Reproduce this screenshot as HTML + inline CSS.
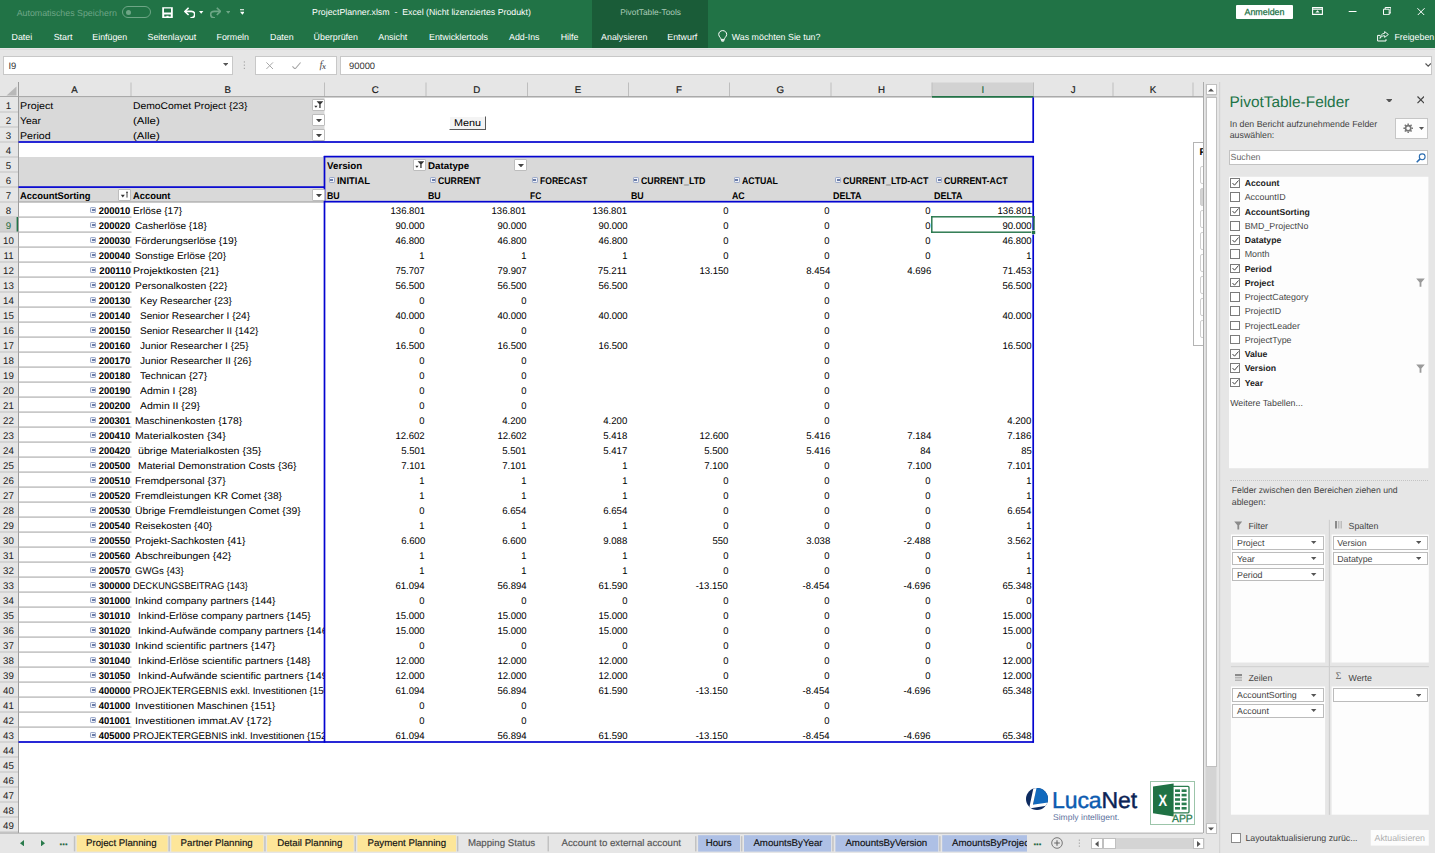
<!DOCTYPE html>
<html lang="de">
<head>
<meta charset="utf-8">
<title>ProjectPlanner.xlsm - Excel</title>
<style>
html,body{margin:0;padding:0}
body{width:1435px;height:853px;overflow:hidden;background:#e6e6e6;position:relative;font-family:"Liberation Sans",sans-serif;font-size:9px;text-rendering:geometricPrecision}
div,svg,i{position:absolute;display:block}
.t{white-space:pre}
.cb{width:6.4px;height:6.4px;box-sizing:border-box;border:1px solid #9aa8c9;background:#eef1f8;border-radius:1.2px}
.cb:after{content:"";position:absolute;left:0.5px;top:1.6px;width:3.4px;height:1.2px;background:#6a7ba6}
</style>
</head>
<body>
<svg style="left:0;top:0" width="1435" height="853" viewBox="0 0 1435 853"><rect x="0" y="0" width="1435" height="48" fill="#217346"/><rect x="592" y="0" width="116" height="48" fill="#1a5c38"/></svg>
<div class="t" style="top:5.7px;height:14px;line-height:14px;font-size:8.84px;color:#6ea686;left:16.7px;transform-origin:0 50%;">Automatisches Speichern</div>
<div style="left:122.4px;top:6.2px;width:28.4px;height:12px;border:1px solid #6ea686;border-radius:6px;box-sizing:border-box"></div>
<div style="left:125.6px;top:9.6px;width:5.4px;height:5.4px;background:#6ea686;border-radius:50%"></div>
<svg style="left:162.4px;top:6.9px" width="11" height="11.2" viewBox="0 0 11 11.2"><path d="M0.2 0.2H10.8V11H0.2Z" fill="#fff"/><path d="M2 1.6H9V5.4H2Z M2.2 7.4H8.8V9.6H6.6V8.8H4.4V9.6H2.2Z" fill="#217346"/></svg>
<svg style="left:184px;top:6.6px" width="11.4" height="11.4" viewBox="0 0 11.4 11.4"><g fill="none" stroke="#fff" stroke-width="1.6"><path d="M4.6 0.8L0.9 4.4L4.6 8"/><path d="M1.2 4.4H7.2C9.4 4.4 10.7 5.9 10.7 7.6C10.7 9.3 9.4 10.7 7.4 10.7H6.4"/></g></svg>
<svg style="left:199.2px;top:10.8px" width="4.4" height="2.8" viewBox="0 0 4.4 2.8"><path d="M0 0H4.4L2.2 2.8Z" fill="#fff"/></svg>
<svg style="left:209.8px;top:6.6px" width="11.4" height="11.4" viewBox="0 0 11.4 11.4"><g transform="translate(11.4 0) scale(-1 1)" fill="none" stroke="#6ea686" stroke-width="1.6"><path d="M4.6 0.8L0.9 4.4L4.6 8"/><path d="M1.2 4.4H7.2C9.4 4.4 10.7 5.9 10.7 7.6C10.7 9.3 9.4 10.7 7.4 10.7H6.4"/></g></svg>
<svg style="left:225.6px;top:10.8px" width="4.4" height="2.8" viewBox="0 0 4.4 2.8"><path d="M0 0H4.4L2.2 2.8Z" fill="#6ea686"/></svg>
<svg style="left:239.6px;top:9.2px" width="4.8" height="6" viewBox="0 0 4.8 6"><path d="M0 0.2H4.8V1.3H0Z M0 2.8H4.8L2.4 5.8Z" fill="#fff"/></svg>
<div class="t" style="top:5.2px;height:14px;line-height:14px;font-size:8.77px;color:#fff;left:312.1px;transform-origin:0 50%;">ProjectPlanner.xlsm  -  Excel (Nicht lizenziertes Produkt)</div>
<div class="t" style="top:5.4px;height:14px;line-height:14px;font-size:8.35px;color:#a9cbb7;left:620.2px;transform-origin:0 50%;">PivotTable-Tools</div>
<div style="left:1235.6px;top:4.5px;width:57.7px;height:14.3px;background:#fff;border-radius:1px"></div>
<div class="t" style="top:5px;height:14px;line-height:14px;font-size:8.9px;color:#217346;left:1235.5px;width:58px;text-align:center;transform-origin:50% 50%;-webkit-text-stroke:0.25px #217346;">Anmelden</div>
<svg style="left:1312.3px;top:7.4px" width="11" height="8" viewBox="0 0 11 8"><path d="M0.6 0.6H10.4V7.4H0.6Z M0.6 2.2H10.4" fill="none" stroke="#fff" stroke-width="1.1"/><path d="M5.5 3.2L7.6 5.6H3.4Z" fill="#fff"/></svg>
<svg style="left:0;top:0" width="1435" height="853" viewBox="0 0 1435 853"><rect x="1348.7" y="11" width="7.8" height="1" fill="#fff"/></svg>
<svg style="left:1382.8px;top:7.2px" width="8.4" height="8.2" viewBox="0 0 8.4 8.2"><path d="M0.5 2.2H6.2V7.7H0.5Z" fill="none" stroke="#fff" stroke-width="1"/><path d="M2.2 2.2V0.5H7.9V6H6.2" fill="none" stroke="#fff" stroke-width="1"/></svg>
<svg style="left:1417.4px;top:7.8px" width="8" height="7.6" viewBox="0 0 8 7.6"><path d="M0.4 0.2L7.6 7.4M7.6 0.2L0.4 7.4" fill="none" stroke="#fff" stroke-width="1"/></svg>
<div class="t" style="top:29.5px;height:14px;line-height:14px;font-size:8.86px;color:#fff;left:11.5px;transform-origin:0 50%;">Datei</div>
<div class="t" style="top:29.5px;height:14px;line-height:14px;font-size:8.86px;color:#fff;left:53.7px;transform-origin:0 50%;">Start</div>
<div class="t" style="top:29.5px;height:14px;line-height:14px;font-size:8.86px;color:#fff;left:92.3px;transform-origin:0 50%;">Einfügen</div>
<div class="t" style="top:29.5px;height:14px;line-height:14px;font-size:8.86px;color:#fff;left:147.5px;transform-origin:0 50%;">Seitenlayout</div>
<div class="t" style="top:29.5px;height:14px;line-height:14px;font-size:8.86px;color:#fff;left:216.5px;transform-origin:0 50%;">Formeln</div>
<div class="t" style="top:29.5px;height:14px;line-height:14px;font-size:8.86px;color:#fff;left:270px;transform-origin:0 50%;">Daten</div>
<div class="t" style="top:29.5px;height:14px;line-height:14px;font-size:8.86px;color:#fff;left:313.6px;transform-origin:0 50%;">Überprüfen</div>
<div class="t" style="top:29.5px;height:14px;line-height:14px;font-size:8.86px;color:#fff;left:378.3px;transform-origin:0 50%;">Ansicht</div>
<div class="t" style="top:29.5px;height:14px;line-height:14px;font-size:8.86px;color:#fff;left:429px;transform-origin:0 50%;">Entwicklertools</div>
<div class="t" style="top:29.5px;height:14px;line-height:14px;font-size:8.86px;color:#fff;left:509px;transform-origin:0 50%;">Add-Ins</div>
<div class="t" style="top:29.5px;height:14px;line-height:14px;font-size:8.86px;color:#fff;left:560.7px;transform-origin:0 50%;">Hilfe</div>
<div class="t" style="top:29.5px;height:14px;line-height:14px;font-size:8.86px;color:#fff;left:601.1px;transform-origin:0 50%;">Analysieren</div>
<div class="t" style="top:29.5px;height:14px;line-height:14px;font-size:8.86px;color:#fff;left:667.3px;transform-origin:0 50%;">Entwurf</div>
<div class="t" style="top:29.5px;height:14px;line-height:14px;font-size:8.86px;color:#fff;left:731.8px;transform-origin:0 50%;">Was möchten Sie tun?</div>
<div class="t" style="top:29.5px;height:14px;line-height:14px;font-size:8.86px;color:#fff;left:1394.4px;transform-origin:0 50%;">Freigeben</div>
<svg style="left:718.2px;top:29.8px" width="9.4" height="12.4" viewBox="0 0 9.4 12.4"><path d="M4.7 0.6C2.4 0.6 0.7 2.3 0.7 4.4C0.7 5.8 1.5 6.6 2.2 7.5C2.7 8.1 2.9 8.7 2.9 9.4H6.5C6.5 8.7 6.7 8.1 7.2 7.5C7.9 6.6 8.7 5.8 8.7 4.4C8.7 2.3 7 0.6 4.7 0.6Z" fill="none" stroke="#fff" stroke-width="1"/><path d="M3 10.6H6.4M3.6 11.8H5.8" stroke="#fff" stroke-width="0.9" fill="none"/></svg>
<svg style="left:1377px;top:31.2px" width="12" height="10.6" viewBox="0 0 12 10.6"><path d="M3 4.4H0.6V10H9V8.2" fill="none" stroke="#fff" stroke-width="1"/><path d="M7.6 0.6L11.4 3.5L7.6 6.4V4.7C5.4 4.7 4 5.6 3 7.4C3.2 4.6 4.8 2.6 7.6 2.3Z" fill="none" stroke="#fff" stroke-width="0.9" stroke-linejoin="round"/></svg>
<svg style="left:0;top:0" width="1435" height="853" viewBox="0 0 1435 853"><rect x="0" y="49" width="1435" height="1" fill="#dcdcdc"/></svg>
<div style="left:3px;top:55.7px;width:230px;height:19px;background:#fff;border:1px solid #c8c8c8;box-sizing:border-box"></div>
<div class="t" style="top:58.7px;height:14px;line-height:14px;font-size:9.4px;color:#333;left:8.5px;transform-origin:0 50%;">I9</div>
<div style="left:255.4px;top:55.7px;width:82px;height:19px;background:#fff;border:1px solid #c8c8c8;box-sizing:border-box"></div>
<div style="left:340.4px;top:55.7px;width:1092px;height:19px;background:#fff;border:1px solid #c8c8c8;box-sizing:border-box"></div>
<div class="t" style="top:58.7px;height:14px;line-height:14px;font-size:9.4px;color:#333;left:349px;transform-origin:0 50%;">90000</div>
<svg style="left:222.6px;top:63px" width="5.4" height="3" viewBox="0 0 5.4 3"><path d="M0 0H5.4L2.7 3Z" fill="#555"/></svg>
<svg style="left:0;top:0" width="1435" height="853" viewBox="0 0 1435 853"><rect x="243.8" y="61.4" width="1.1" height="1.1" fill="#9a9a9a"/><rect x="243.8" y="64.6" width="1.1" height="1.1" fill="#9a9a9a"/><rect x="243.8" y="67.8" width="1.1" height="1.1" fill="#9a9a9a"/></svg>
<svg style="left:266.2px;top:61.8px" width="7.4" height="7.4" viewBox="0 0 7.4 7.4"><path d="M0.4 0.4L7 7M7 0.4L0.4 7" stroke="#a6a6a6" stroke-width="1" fill="none"/></svg>
<svg style="left:292.4px;top:61.6px" width="9" height="7.6" viewBox="0 0 9 7.6"><path d="M0.4 4.4L3 7L8.6 0.5" stroke="#a6a6a6" stroke-width="1.1" fill="none"/></svg>
<div class="t" style="left:319.6px;top:58px;height:14px;line-height:14px;font-family:'Liberation Serif',serif;font-style:italic;font-size:11px;color:#555;letter-spacing:-0.6px">f<span style="font-size:8px;position:relative;top:1.2px;font-weight:bold">x</span></div>
<svg style="left:1424.6px;top:63.4px" width="6.4" height="4" viewBox="0 0 6.4 4"><path d="M0.5 0.5L3.2 3.2L5.9 0.5" stroke="#555" stroke-width="1.1" fill="none"/></svg>
<svg style="left:0;top:0" width="1435" height="853" viewBox="0 0 1435 853"><rect x="18" y="97" width="1185" height="736" fill="#fff"/></svg>
<div class="t" style="top:84.2px;height:14px;line-height:14px;font-size:9.7px;color:#1c1c1c;left:54.5px;width:40px;text-align:center;transform-origin:50% 50%;-webkit-text-stroke:0.2px;">A</div>
<div class="t" style="top:84.2px;height:14px;line-height:14px;font-size:9.7px;color:#1c1c1c;left:207.75px;width:40px;text-align:center;transform-origin:50% 50%;-webkit-text-stroke:0.2px;">B</div>
<div class="t" style="top:84.2px;height:14px;line-height:14px;font-size:9.7px;color:#1c1c1c;left:355.25px;width:40px;text-align:center;transform-origin:50% 50%;-webkit-text-stroke:0.2px;">C</div>
<div class="t" style="top:84.2px;height:14px;line-height:14px;font-size:9.7px;color:#1c1c1c;left:456.75px;width:40px;text-align:center;transform-origin:50% 50%;-webkit-text-stroke:0.2px;">D</div>
<div class="t" style="top:84.2px;height:14px;line-height:14px;font-size:9.7px;color:#1c1c1c;left:558px;width:40px;text-align:center;transform-origin:50% 50%;-webkit-text-stroke:0.2px;">E</div>
<div class="t" style="top:84.2px;height:14px;line-height:14px;font-size:9.7px;color:#1c1c1c;left:659px;width:40px;text-align:center;transform-origin:50% 50%;-webkit-text-stroke:0.2px;">F</div>
<div class="t" style="top:84.2px;height:14px;line-height:14px;font-size:9.7px;color:#1c1c1c;left:760.25px;width:40px;text-align:center;transform-origin:50% 50%;-webkit-text-stroke:0.2px;">G</div>
<div class="t" style="top:84.2px;height:14px;line-height:14px;font-size:9.7px;color:#1c1c1c;left:861.5px;width:40px;text-align:center;transform-origin:50% 50%;-webkit-text-stroke:0.2px;">H</div>
<svg style="left:0;top:0" width="1435" height="853" viewBox="0 0 1435 853"><rect x="932" y="82.5" width="101.5" height="14.5" fill="#d2d2d2"/></svg>
<div class="t" style="top:84.2px;height:14px;line-height:14px;font-size:9.7px;color:#1e6b41;left:962.75px;width:40px;text-align:center;transform-origin:50% 50%;-webkit-text-stroke:0.2px;">I</div>
<div class="t" style="top:84.2px;height:14px;line-height:14px;font-size:9.7px;color:#1c1c1c;left:1053.25px;width:40px;text-align:center;transform-origin:50% 50%;-webkit-text-stroke:0.2px;">J</div>
<div class="t" style="top:84.2px;height:14px;line-height:14px;font-size:9.7px;color:#1c1c1c;left:1133px;width:40px;text-align:center;transform-origin:50% 50%;-webkit-text-stroke:0.2px;">K</div>
<svg style="left:0;top:0" width="1435" height="853" viewBox="0 0 1435 853"><rect x="130.5" y="82.5" width="1" height="14.5" fill="#bebebe"/><rect x="324" y="82.5" width="1" height="14.5" fill="#bebebe"/><rect x="425.5" y="82.5" width="1" height="14.5" fill="#bebebe"/><rect x="527" y="82.5" width="1" height="14.5" fill="#bebebe"/><rect x="628" y="82.5" width="1" height="14.5" fill="#bebebe"/><rect x="729" y="82.5" width="1" height="14.5" fill="#bebebe"/><rect x="830.5" y="82.5" width="1" height="14.5" fill="#bebebe"/><rect x="931.5" y="82.5" width="1" height="14.5" fill="#bebebe"/><rect x="1033" y="82.5" width="1" height="14.5" fill="#bebebe"/><rect x="1112.5" y="82.5" width="1" height="14.5" fill="#bebebe"/><rect x="1192.5" y="82.5" width="1" height="14.5" fill="#bebebe"/><rect x="18" y="82" width="1" height="15" fill="#9c9c9c"/><rect x="0" y="96.1" width="1203" height="1.4" fill="#a4a4a4"/><rect x="932" y="96" width="101.5" height="1.7" fill="#217346"/></svg>
<svg style="left:6px;top:85.5px" width="11" height="10" viewBox="0 0 11 10"><path d="M10.5 0.5V9.5H0.5Z" fill="#b8b8b8"/></svg>
<svg style="left:0;top:0" width="1435" height="853" viewBox="0 0 1435 853"><rect x="0" y="97" width="18" height="736" fill="#e6e6e6"/><rect x="0" y="111.5" width="18" height="1" fill="#c2c2c2"/><rect x="0" y="126.5" width="18" height="1" fill="#c2c2c2"/><rect x="0" y="141.5" width="18" height="1" fill="#c2c2c2"/><rect x="0" y="156.5" width="18" height="1" fill="#c2c2c2"/><rect x="0" y="171.5" width="18" height="1" fill="#c2c2c2"/><rect x="0" y="186.5" width="18" height="1" fill="#c2c2c2"/><rect x="0" y="201.5" width="18" height="1" fill="#c2c2c2"/><rect x="0" y="216.5" width="18" height="1" fill="#c2c2c2"/><rect x="0" y="217" width="18" height="15" fill="#d2d2d2"/><rect x="16.6" y="217" width="1.6" height="15" fill="#217346"/><rect x="0" y="231.5" width="18" height="1" fill="#c2c2c2"/><rect x="0" y="246.5" width="18" height="1" fill="#c2c2c2"/><rect x="0" y="261.5" width="18" height="1" fill="#c2c2c2"/><rect x="0" y="276.5" width="18" height="1" fill="#c2c2c2"/><rect x="0" y="291.5" width="18" height="1" fill="#c2c2c2"/><rect x="0" y="306.5" width="18" height="1" fill="#c2c2c2"/><rect x="0" y="321.5" width="18" height="1" fill="#c2c2c2"/><rect x="0" y="336.5" width="18" height="1" fill="#c2c2c2"/><rect x="0" y="351.5" width="18" height="1" fill="#c2c2c2"/><rect x="0" y="366.5" width="18" height="1" fill="#c2c2c2"/><rect x="0" y="381.5" width="18" height="1" fill="#c2c2c2"/><rect x="0" y="396.5" width="18" height="1" fill="#c2c2c2"/><rect x="0" y="411.5" width="18" height="1" fill="#c2c2c2"/><rect x="0" y="426.5" width="18" height="1" fill="#c2c2c2"/><rect x="0" y="441.5" width="18" height="1" fill="#c2c2c2"/><rect x="0" y="456.5" width="18" height="1" fill="#c2c2c2"/><rect x="0" y="471.5" width="18" height="1" fill="#c2c2c2"/><rect x="0" y="486.5" width="18" height="1" fill="#c2c2c2"/><rect x="0" y="501.5" width="18" height="1" fill="#c2c2c2"/><rect x="0" y="516.5" width="18" height="1" fill="#c2c2c2"/><rect x="0" y="531.5" width="18" height="1" fill="#c2c2c2"/><rect x="0" y="546.5" width="18" height="1" fill="#c2c2c2"/><rect x="0" y="561.5" width="18" height="1" fill="#c2c2c2"/><rect x="0" y="576.5" width="18" height="1" fill="#c2c2c2"/><rect x="0" y="591.5" width="18" height="1" fill="#c2c2c2"/><rect x="0" y="606.5" width="18" height="1" fill="#c2c2c2"/><rect x="0" y="621.5" width="18" height="1" fill="#c2c2c2"/><rect x="0" y="636.5" width="18" height="1" fill="#c2c2c2"/><rect x="0" y="651.5" width="18" height="1" fill="#c2c2c2"/><rect x="0" y="666.5" width="18" height="1" fill="#c2c2c2"/><rect x="0" y="681.5" width="18" height="1" fill="#c2c2c2"/><rect x="0" y="696.5" width="18" height="1" fill="#c2c2c2"/><rect x="0" y="711.5" width="18" height="1" fill="#c2c2c2"/><rect x="0" y="726.5" width="18" height="1" fill="#c2c2c2"/><rect x="0" y="741.5" width="18" height="1" fill="#c2c2c2"/><rect x="0" y="756.5" width="18" height="1" fill="#c2c2c2"/><rect x="0" y="771.5" width="18" height="1" fill="#c2c2c2"/><rect x="0" y="786.5" width="18" height="1" fill="#c2c2c2"/><rect x="0" y="801.5" width="18" height="1" fill="#c2c2c2"/><rect x="0" y="816.5" width="18" height="1" fill="#c2c2c2"/><rect x="0" y="831.5" width="18" height="1" fill="#c2c2c2"/></svg>
<div class="t" style="top:100.1px;height:14px;line-height:14px;font-size:9.7px;color:#1c1c1c;left:-0.5px;width:18px;text-align:center;transform-origin:50% 50%;">1</div>
<div class="t" style="top:115.1px;height:14px;line-height:14px;font-size:9.7px;color:#1c1c1c;left:-0.5px;width:18px;text-align:center;transform-origin:50% 50%;">2</div>
<div class="t" style="top:130.1px;height:14px;line-height:14px;font-size:9.7px;color:#1c1c1c;left:-0.5px;width:18px;text-align:center;transform-origin:50% 50%;">3</div>
<div class="t" style="top:145.1px;height:14px;line-height:14px;font-size:9.7px;color:#1c1c1c;left:-0.5px;width:18px;text-align:center;transform-origin:50% 50%;">4</div>
<div class="t" style="top:160.1px;height:14px;line-height:14px;font-size:9.7px;color:#1c1c1c;left:-0.5px;width:18px;text-align:center;transform-origin:50% 50%;">5</div>
<div class="t" style="top:175.1px;height:14px;line-height:14px;font-size:9.7px;color:#1c1c1c;left:-0.5px;width:18px;text-align:center;transform-origin:50% 50%;">6</div>
<div class="t" style="top:190.1px;height:14px;line-height:14px;font-size:9.7px;color:#1c1c1c;left:-0.5px;width:18px;text-align:center;transform-origin:50% 50%;">7</div>
<div class="t" style="top:205.1px;height:14px;line-height:14px;font-size:9.7px;color:#1c1c1c;left:-0.5px;width:18px;text-align:center;transform-origin:50% 50%;">8</div>
<div class="t" style="top:220.1px;height:14px;line-height:14px;font-size:9.7px;color:#1e6b41;left:-0.5px;width:18px;text-align:center;transform-origin:50% 50%;">9</div>
<div class="t" style="top:235.1px;height:14px;line-height:14px;font-size:9.7px;color:#1c1c1c;left:-0.5px;width:18px;text-align:center;transform-origin:50% 50%;">10</div>
<div class="t" style="top:250.1px;height:14px;line-height:14px;font-size:9.7px;color:#1c1c1c;left:-0.5px;width:18px;text-align:center;transform-origin:50% 50%;">11</div>
<div class="t" style="top:265.1px;height:14px;line-height:14px;font-size:9.7px;color:#1c1c1c;left:-0.5px;width:18px;text-align:center;transform-origin:50% 50%;">12</div>
<div class="t" style="top:280.1px;height:14px;line-height:14px;font-size:9.7px;color:#1c1c1c;left:-0.5px;width:18px;text-align:center;transform-origin:50% 50%;">13</div>
<div class="t" style="top:295.1px;height:14px;line-height:14px;font-size:9.7px;color:#1c1c1c;left:-0.5px;width:18px;text-align:center;transform-origin:50% 50%;">14</div>
<div class="t" style="top:310.1px;height:14px;line-height:14px;font-size:9.7px;color:#1c1c1c;left:-0.5px;width:18px;text-align:center;transform-origin:50% 50%;">15</div>
<div class="t" style="top:325.1px;height:14px;line-height:14px;font-size:9.7px;color:#1c1c1c;left:-0.5px;width:18px;text-align:center;transform-origin:50% 50%;">16</div>
<div class="t" style="top:340.1px;height:14px;line-height:14px;font-size:9.7px;color:#1c1c1c;left:-0.5px;width:18px;text-align:center;transform-origin:50% 50%;">17</div>
<div class="t" style="top:355.1px;height:14px;line-height:14px;font-size:9.7px;color:#1c1c1c;left:-0.5px;width:18px;text-align:center;transform-origin:50% 50%;">18</div>
<div class="t" style="top:370.1px;height:14px;line-height:14px;font-size:9.7px;color:#1c1c1c;left:-0.5px;width:18px;text-align:center;transform-origin:50% 50%;">19</div>
<div class="t" style="top:385.1px;height:14px;line-height:14px;font-size:9.7px;color:#1c1c1c;left:-0.5px;width:18px;text-align:center;transform-origin:50% 50%;">20</div>
<div class="t" style="top:400.1px;height:14px;line-height:14px;font-size:9.7px;color:#1c1c1c;left:-0.5px;width:18px;text-align:center;transform-origin:50% 50%;">21</div>
<div class="t" style="top:415.1px;height:14px;line-height:14px;font-size:9.7px;color:#1c1c1c;left:-0.5px;width:18px;text-align:center;transform-origin:50% 50%;">22</div>
<div class="t" style="top:430.1px;height:14px;line-height:14px;font-size:9.7px;color:#1c1c1c;left:-0.5px;width:18px;text-align:center;transform-origin:50% 50%;">23</div>
<div class="t" style="top:445.1px;height:14px;line-height:14px;font-size:9.7px;color:#1c1c1c;left:-0.5px;width:18px;text-align:center;transform-origin:50% 50%;">24</div>
<div class="t" style="top:460.1px;height:14px;line-height:14px;font-size:9.7px;color:#1c1c1c;left:-0.5px;width:18px;text-align:center;transform-origin:50% 50%;">25</div>
<div class="t" style="top:475.1px;height:14px;line-height:14px;font-size:9.7px;color:#1c1c1c;left:-0.5px;width:18px;text-align:center;transform-origin:50% 50%;">26</div>
<div class="t" style="top:490.1px;height:14px;line-height:14px;font-size:9.7px;color:#1c1c1c;left:-0.5px;width:18px;text-align:center;transform-origin:50% 50%;">27</div>
<div class="t" style="top:505.1px;height:14px;line-height:14px;font-size:9.7px;color:#1c1c1c;left:-0.5px;width:18px;text-align:center;transform-origin:50% 50%;">28</div>
<div class="t" style="top:520.1px;height:14px;line-height:14px;font-size:9.7px;color:#1c1c1c;left:-0.5px;width:18px;text-align:center;transform-origin:50% 50%;">29</div>
<div class="t" style="top:535.1px;height:14px;line-height:14px;font-size:9.7px;color:#1c1c1c;left:-0.5px;width:18px;text-align:center;transform-origin:50% 50%;">30</div>
<div class="t" style="top:550.1px;height:14px;line-height:14px;font-size:9.7px;color:#1c1c1c;left:-0.5px;width:18px;text-align:center;transform-origin:50% 50%;">31</div>
<div class="t" style="top:565.1px;height:14px;line-height:14px;font-size:9.7px;color:#1c1c1c;left:-0.5px;width:18px;text-align:center;transform-origin:50% 50%;">32</div>
<div class="t" style="top:580.1px;height:14px;line-height:14px;font-size:9.7px;color:#1c1c1c;left:-0.5px;width:18px;text-align:center;transform-origin:50% 50%;">33</div>
<div class="t" style="top:595.1px;height:14px;line-height:14px;font-size:9.7px;color:#1c1c1c;left:-0.5px;width:18px;text-align:center;transform-origin:50% 50%;">34</div>
<div class="t" style="top:610.1px;height:14px;line-height:14px;font-size:9.7px;color:#1c1c1c;left:-0.5px;width:18px;text-align:center;transform-origin:50% 50%;">35</div>
<div class="t" style="top:625.1px;height:14px;line-height:14px;font-size:9.7px;color:#1c1c1c;left:-0.5px;width:18px;text-align:center;transform-origin:50% 50%;">36</div>
<div class="t" style="top:640.1px;height:14px;line-height:14px;font-size:9.7px;color:#1c1c1c;left:-0.5px;width:18px;text-align:center;transform-origin:50% 50%;">37</div>
<div class="t" style="top:655.1px;height:14px;line-height:14px;font-size:9.7px;color:#1c1c1c;left:-0.5px;width:18px;text-align:center;transform-origin:50% 50%;">38</div>
<div class="t" style="top:670.1px;height:14px;line-height:14px;font-size:9.7px;color:#1c1c1c;left:-0.5px;width:18px;text-align:center;transform-origin:50% 50%;">39</div>
<div class="t" style="top:685.1px;height:14px;line-height:14px;font-size:9.7px;color:#1c1c1c;left:-0.5px;width:18px;text-align:center;transform-origin:50% 50%;">40</div>
<div class="t" style="top:700.1px;height:14px;line-height:14px;font-size:9.7px;color:#1c1c1c;left:-0.5px;width:18px;text-align:center;transform-origin:50% 50%;">41</div>
<div class="t" style="top:715.1px;height:14px;line-height:14px;font-size:9.7px;color:#1c1c1c;left:-0.5px;width:18px;text-align:center;transform-origin:50% 50%;">42</div>
<div class="t" style="top:730.1px;height:14px;line-height:14px;font-size:9.7px;color:#1c1c1c;left:-0.5px;width:18px;text-align:center;transform-origin:50% 50%;">43</div>
<div class="t" style="top:745.1px;height:14px;line-height:14px;font-size:9.7px;color:#1c1c1c;left:-0.5px;width:18px;text-align:center;transform-origin:50% 50%;">44</div>
<div class="t" style="top:760.1px;height:14px;line-height:14px;font-size:9.7px;color:#1c1c1c;left:-0.5px;width:18px;text-align:center;transform-origin:50% 50%;">45</div>
<div class="t" style="top:775.1px;height:14px;line-height:14px;font-size:9.7px;color:#1c1c1c;left:-0.5px;width:18px;text-align:center;transform-origin:50% 50%;">46</div>
<div class="t" style="top:790.1px;height:14px;line-height:14px;font-size:9.7px;color:#1c1c1c;left:-0.5px;width:18px;text-align:center;transform-origin:50% 50%;">47</div>
<div class="t" style="top:805.1px;height:14px;line-height:14px;font-size:9.7px;color:#1c1c1c;left:-0.5px;width:18px;text-align:center;transform-origin:50% 50%;">48</div>
<div class="t" style="top:820.1px;height:14px;line-height:14px;font-size:9.7px;color:#1c1c1c;left:-0.5px;width:18px;text-align:center;transform-origin:50% 50%;">49</div>
<svg style="left:0;top:0" width="1435" height="853" viewBox="0 0 1435 853"><rect x="18" y="97" width="1" height="736" fill="#9c9c9c"/><rect x="19" y="97.6" width="305.5" height="44" fill="#d9d9d9"/><rect x="19" y="157" width="1014.5" height="45" fill="#d9d9d9"/></svg>
<div class="t" style="top:100px;height:14px;line-height:14px;font-size:9.7px;color:#000;left:19.9px;transform-origin:0 50%;transform:scaleX(1.106);">Project</div>
<div class="t" style="top:100px;height:14px;line-height:14px;font-size:9.7px;color:#000;left:132.9px;transform-origin:0 50%;transform:scaleX(1.068);">DemoComet Project {23}</div>
<div class="t" style="top:115px;height:14px;line-height:14px;font-size:9.7px;color:#000;left:19.8px;transform-origin:0 50%;transform:scaleX(1.066);">Year</div>
<div class="t" style="top:115px;height:14px;line-height:14px;font-size:9.7px;color:#000;left:132.9px;transform-origin:0 50%;transform:scaleX(1.184);">(Alle)</div>
<div class="t" style="top:130px;height:14px;line-height:14px;font-size:9.7px;color:#000;left:19.9px;transform-origin:0 50%;transform:scaleX(1.095);">Period</div>
<div class="t" style="top:130px;height:14px;line-height:14px;font-size:9.7px;color:#000;left:132.9px;transform-origin:0 50%;transform:scaleX(1.184);">(Alle)</div>
<div class="t" style="top:190px;height:14px;line-height:14px;font-size:9.7px;color:#000;font-weight:bold;left:20.1px;transform-origin:0 50%;transform:scaleX(0.969);">AccountSorting</div>
<div class="t" style="top:190px;height:14px;line-height:14px;font-size:9.7px;color:#000;font-weight:bold;left:133.3px;transform-origin:0 50%;transform:scaleX(0.966);">Account</div>
<div class="t" style="top:160px;height:14px;line-height:14px;font-size:9.7px;color:#000;font-weight:bold;left:326.8px;transform-origin:0 50%;transform:scaleX(1.006);">Version</div>
<div class="t" style="top:160px;height:14px;line-height:14px;font-size:9.7px;color:#000;font-weight:bold;left:428.2px;transform-origin:0 50%;transform:scaleX(1.007);">Datatype</div>
<i class="cb" style="left:328.5px;top:176.8px"></i>
<div class="t" style="top:175px;height:14px;line-height:14px;font-size:9.7px;color:#000;font-weight:bold;left:336.5px;transform-origin:0 50%;transform:scaleX(0.972);">INITIAL</div>
<div class="t" style="top:190px;height:14px;line-height:14px;font-size:9.7px;color:#000;font-weight:bold;left:326.8px;transform-origin:0 50%;transform:scaleX(0.91);">BU</div>
<i class="cb" style="left:430px;top:176.8px"></i>
<div class="t" style="top:175px;height:14px;line-height:14px;font-size:9.7px;color:#000;font-weight:bold;left:438px;transform-origin:0 50%;transform:scaleX(0.901);">CURRENT</div>
<div class="t" style="top:190px;height:14px;line-height:14px;font-size:9.7px;color:#000;font-weight:bold;left:428.3px;transform-origin:0 50%;transform:scaleX(0.91);">BU</div>
<i class="cb" style="left:531.5px;top:176.8px"></i>
<div class="t" style="top:175px;height:14px;line-height:14px;font-size:9.7px;color:#000;font-weight:bold;left:539.5px;transform-origin:0 50%;transform:scaleX(0.886);">FORECAST</div>
<div class="t" style="top:190px;height:14px;line-height:14px;font-size:9.7px;color:#000;font-weight:bold;left:529.8px;transform-origin:0 50%;transform:scaleX(0.87);">FC</div>
<i class="cb" style="left:632.5px;top:176.8px"></i>
<div class="t" style="top:175px;height:14px;line-height:14px;font-size:9.7px;color:#000;font-weight:bold;left:640.5px;transform-origin:0 50%;transform:scaleX(0.909);">CURRENT_LTD</div>
<div class="t" style="top:190px;height:14px;line-height:14px;font-size:9.7px;color:#000;font-weight:bold;left:630.8px;transform-origin:0 50%;transform:scaleX(0.91);">BU</div>
<i class="cb" style="left:733.5px;top:176.8px"></i>
<div class="t" style="top:175px;height:14px;line-height:14px;font-size:9.7px;color:#000;font-weight:bold;left:741.5px;transform-origin:0 50%;transform:scaleX(0.903);">ACTUAL</div>
<div class="t" style="top:190px;height:14px;line-height:14px;font-size:9.7px;color:#000;font-weight:bold;left:731.8px;transform-origin:0 50%;transform:scaleX(0.91);">AC</div>
<i class="cb" style="left:835px;top:176.8px"></i>
<div class="t" style="top:175px;height:14px;line-height:14px;font-size:9.7px;color:#000;font-weight:bold;left:843px;transform-origin:0 50%;transform:scaleX(0.908);">CURRENT_LTD-ACT</div>
<div class="t" style="top:190px;height:14px;line-height:14px;font-size:9.7px;color:#000;font-weight:bold;left:833.3px;transform-origin:0 50%;transform:scaleX(0.923);">DELTA</div>
<i class="cb" style="left:936px;top:176.8px"></i>
<div class="t" style="top:175px;height:14px;line-height:14px;font-size:9.7px;color:#000;font-weight:bold;left:944px;transform-origin:0 50%;transform:scaleX(0.91);">CURRENT-ACT</div>
<div class="t" style="top:190px;height:14px;line-height:14px;font-size:9.7px;color:#000;font-weight:bold;left:934.3px;transform-origin:0 50%;transform:scaleX(0.923);">DELTA</div>
<div style="left:0;top:0;width:324px;height:853px;overflow:hidden;background:none">
<div class="t" style="top:205px;height:14px;line-height:14px;font-size:9.7px;color:#000;left:132.9px;transform-origin:0 50%;transform:scaleX(1.037);">Erlöse {17}</div>
<div class="t" style="top:220px;height:14px;line-height:14px;font-size:9.7px;color:#000;left:135.1px;transform-origin:0 50%;transform:scaleX(1.042);">Casherlöse {18}</div>
<div class="t" style="top:235px;height:14px;line-height:14px;font-size:9.7px;color:#000;left:135.4px;transform-origin:0 50%;transform:scaleX(1.066);">Förderungserlöse {19}</div>
<div class="t" style="top:250px;height:14px;line-height:14px;font-size:9.7px;color:#000;left:135.1px;transform-origin:0 50%;transform:scaleX(1.037);">Sonstige Erlöse {20}</div>
<div class="t" style="top:265px;height:14px;line-height:14px;font-size:9.7px;color:#000;left:132.9px;transform-origin:0 50%;transform:scaleX(1.094);">Projektkosten {21}</div>
<div class="t" style="top:280px;height:14px;line-height:14px;font-size:9.7px;color:#000;left:135.4px;transform-origin:0 50%;transform:scaleX(1.066);">Personalkosten {22}</div>
<div class="t" style="top:295px;height:14px;line-height:14px;font-size:9.7px;color:#000;left:139.8px;transform-origin:0 50%;transform:scaleX(1.027);">Key Researcher {23}</div>
<div class="t" style="top:310px;height:14px;line-height:14px;font-size:9.7px;color:#000;left:139.5px;transform-origin:0 50%;transform:scaleX(1.037);">Senior Researcher I {24}</div>
<div class="t" style="top:325px;height:14px;line-height:14px;font-size:9.7px;color:#000;left:139.5px;transform-origin:0 50%;transform:scaleX(1.037);">Senior Researcher II {142}</div>
<div class="t" style="top:340px;height:14px;line-height:14px;font-size:9.7px;color:#000;left:139.5px;transform-origin:0 50%;transform:scaleX(1.039);">Junior Researcher I {25}</div>
<div class="t" style="top:355px;height:14px;line-height:14px;font-size:9.7px;color:#000;left:139.5px;transform-origin:0 50%;transform:scaleX(1.041);">Junior Researcher II {26}</div>
<div class="t" style="top:370px;height:14px;line-height:14px;font-size:9.7px;color:#000;left:139.8px;transform-origin:0 50%;transform:scaleX(1.056);">Technican {27}</div>
<div class="t" style="top:385px;height:14px;line-height:14px;font-size:9.7px;color:#000;left:139.5px;transform-origin:0 50%;transform:scaleX(1.08);">Admin I {28}</div>
<div class="t" style="top:400px;height:14px;line-height:14px;font-size:9.7px;color:#000;left:139.5px;transform-origin:0 50%;transform:scaleX(1.082);">Admin II {29}</div>
<div class="t" style="top:415px;height:14px;line-height:14px;font-size:9.7px;color:#000;left:135.4px;transform-origin:0 50%;transform:scaleX(1.065);">Maschinenkosten {178}</div>
<div class="t" style="top:430px;height:14px;line-height:14px;font-size:9.7px;color:#000;left:135.4px;transform-origin:0 50%;transform:scaleX(1.095);">Materialkosten {34}</div>
<div class="t" style="top:445px;height:14px;line-height:14px;font-size:9.7px;color:#000;left:137.6px;transform-origin:0 50%;transform:scaleX(1.096);">übrige Materialkosten {35}</div>
<div class="t" style="top:460px;height:14px;line-height:14px;font-size:9.7px;color:#000;left:137.6px;transform-origin:0 50%;transform:scaleX(1.074);">Material Demonstration Costs {36}</div>
<div class="t" style="top:475px;height:14px;line-height:14px;font-size:9.7px;color:#000;left:135.4px;transform-origin:0 50%;transform:scaleX(1.067);">Fremdpersonal {37}</div>
<div class="t" style="top:490px;height:14px;line-height:14px;font-size:9.7px;color:#000;left:135.4px;transform-origin:0 50%;transform:scaleX(1.054);">Fremdleistungen KR Comet {38}</div>
<div class="t" style="top:505px;height:14px;line-height:14px;font-size:9.7px;color:#000;left:135.4px;transform-origin:0 50%;transform:scaleX(1.073);">Übrige Fremdleistungen Comet {39}</div>
<div class="t" style="top:520px;height:14px;line-height:14px;font-size:9.7px;color:#000;left:135.4px;transform-origin:0 50%;transform:scaleX(1.055);">Reisekosten {40}</div>
<div class="t" style="top:535px;height:14px;line-height:14px;font-size:9.7px;color:#000;left:135.4px;transform-origin:0 50%;transform:scaleX(1.063);">Projekt-Sachkosten {41}</div>
<div class="t" style="top:550px;height:14px;line-height:14px;font-size:9.7px;color:#000;left:135.4px;transform-origin:0 50%;transform:scaleX(1.069);">Abschreibungen {42}</div>
<div class="t" style="top:565px;height:14px;line-height:14px;font-size:9.7px;color:#000;left:135.1px;transform-origin:0 50%;transform:scaleX(0.993);">GWGs {43}</div>
<div class="t" style="top:580px;height:14px;line-height:14px;font-size:9.7px;color:#000;left:133.2px;transform-origin:0 50%;transform:scaleX(0.936);">DECKUNGSBEITRAG {143}</div>
<div class="t" style="top:595px;height:14px;line-height:14px;font-size:9.7px;color:#000;left:135.4px;transform-origin:0 50%;transform:scaleX(1.069);">Inkind company partners {144}</div>
<div class="t" style="top:610px;height:14px;line-height:14px;font-size:9.7px;color:#000;left:137.6px;transform-origin:0 50%;transform:scaleX(1.065);">Inkind-Erlöse company partners {145}</div>
<div class="t" style="top:625px;height:14px;line-height:14px;font-size:9.7px;color:#000;left:137.6px;transform-origin:0 50%;transform:scaleX(1.086);">Inkind-Aufwände company partners {146}</div>
<div class="t" style="top:640px;height:14px;line-height:14px;font-size:9.7px;color:#000;left:135.4px;transform-origin:0 50%;transform:scaleX(1.086);">Inkind scientific partners {147}</div>
<div class="t" style="top:655px;height:14px;line-height:14px;font-size:9.7px;color:#000;left:137.6px;transform-origin:0 50%;transform:scaleX(1.079);">Inkind-Erlöse scientific partners {148}</div>
<div class="t" style="top:670px;height:14px;line-height:14px;font-size:9.7px;color:#000;left:137.6px;transform-origin:0 50%;transform:scaleX(1.1);">Inkind-Aufwände scientific partners {149}</div>
<div class="t" style="top:685px;height:14px;line-height:14px;font-size:9.7px;color:#000;left:133.2px;transform-origin:0 50%;transform:scaleX(0.997);">PROJEKTERGEBNIS exkl. Investitionen {150}</div>
<div class="t" style="top:700px;height:14px;line-height:14px;font-size:9.7px;color:#000;left:135.4px;transform-origin:0 50%;transform:scaleX(1.086);">Investitionen Maschinen {151}</div>
<div class="t" style="top:715px;height:14px;line-height:14px;font-size:9.7px;color:#000;left:135.4px;transform-origin:0 50%;transform:scaleX(1.104);">Investitionen immat.AV {172}</div>
<div class="t" style="top:730px;height:14px;line-height:14px;font-size:9.7px;color:#000;left:133.2px;transform-origin:0 50%;transform:scaleX(0.998);">PROJEKTERGEBNIS inkl. Investitionen {152}</div>
</div>
<svg style="left:0;top:0" width="1435" height="853" viewBox="0 0 1435 853"><rect x="18.5" y="216.45" width="113" height="1.3" fill="#b6b6b6"/></svg>
<i class="cb" style="left:90px;top:206.8px"></i>
<div class="t" style="top:205px;height:14px;line-height:14px;font-size:9.7px;color:#000;font-weight:bold;right:1304.4px;transform-origin:100% 50%;text-align:right;transform:scaleX(0.973);">200010</div>
<div class="t" style="top:205px;height:14px;line-height:14px;font-size:9.7px;color:#000;right:1010.2px;transform-origin:100% 50%;text-align:right;transform:scaleX(0.984);">136.801</div>
<div class="t" style="top:205px;height:14px;line-height:14px;font-size:9.7px;color:#000;right:908.7px;transform-origin:100% 50%;text-align:right;transform:scaleX(0.984);">136.801</div>
<div class="t" style="top:205px;height:14px;line-height:14px;font-size:9.7px;color:#000;right:807.7px;transform-origin:100% 50%;text-align:right;transform:scaleX(0.984);">136.801</div>
<div class="t" style="top:205px;height:14px;line-height:14px;font-size:9.7px;color:#000;right:706.7px;transform-origin:100% 50%;text-align:right;transform:scaleX(0.973);">0</div>
<div class="t" style="top:205px;height:14px;line-height:14px;font-size:9.7px;color:#000;right:605.2px;transform-origin:100% 50%;text-align:right;transform:scaleX(0.973);">0</div>
<div class="t" style="top:205px;height:14px;line-height:14px;font-size:9.7px;color:#000;right:504.2px;transform-origin:100% 50%;text-align:right;transform:scaleX(0.973);">0</div>
<div class="t" style="top:205px;height:14px;line-height:14px;font-size:9.7px;color:#000;right:403.3px;transform-origin:100% 50%;text-align:right;transform:scaleX(0.984);">136.801</div>
<svg style="left:0;top:0" width="1435" height="853" viewBox="0 0 1435 853"><rect x="18.5" y="231.45" width="113" height="1.3" fill="#b6b6b6"/></svg>
<i class="cb" style="left:90px;top:221.8px"></i>
<div class="t" style="top:220px;height:14px;line-height:14px;font-size:9.7px;color:#000;font-weight:bold;right:1304.4px;transform-origin:100% 50%;text-align:right;transform:scaleX(0.973);">200020</div>
<div class="t" style="top:220px;height:14px;line-height:14px;font-size:9.7px;color:#000;right:1010.2px;transform-origin:100% 50%;text-align:right;transform:scaleX(0.986);">90.000</div>
<div class="t" style="top:220px;height:14px;line-height:14px;font-size:9.7px;color:#000;right:908.7px;transform-origin:100% 50%;text-align:right;transform:scaleX(0.986);">90.000</div>
<div class="t" style="top:220px;height:14px;line-height:14px;font-size:9.7px;color:#000;right:807.7px;transform-origin:100% 50%;text-align:right;transform:scaleX(0.986);">90.000</div>
<div class="t" style="top:220px;height:14px;line-height:14px;font-size:9.7px;color:#000;right:706.7px;transform-origin:100% 50%;text-align:right;transform:scaleX(0.973);">0</div>
<div class="t" style="top:220px;height:14px;line-height:14px;font-size:9.7px;color:#000;right:605.2px;transform-origin:100% 50%;text-align:right;transform:scaleX(0.973);">0</div>
<div class="t" style="top:220px;height:14px;line-height:14px;font-size:9.7px;color:#000;right:504.2px;transform-origin:100% 50%;text-align:right;transform:scaleX(0.973);">0</div>
<div class="t" style="top:220px;height:14px;line-height:14px;font-size:9.7px;color:#000;right:403.3px;transform-origin:100% 50%;text-align:right;transform:scaleX(0.986);">90.000</div>
<svg style="left:0;top:0" width="1435" height="853" viewBox="0 0 1435 853"><rect x="18.5" y="246.45" width="113" height="1.3" fill="#b6b6b6"/></svg>
<i class="cb" style="left:90px;top:236.8px"></i>
<div class="t" style="top:235px;height:14px;line-height:14px;font-size:9.7px;color:#000;font-weight:bold;right:1304.4px;transform-origin:100% 50%;text-align:right;transform:scaleX(0.973);">200030</div>
<div class="t" style="top:235px;height:14px;line-height:14px;font-size:9.7px;color:#000;right:1010.2px;transform-origin:100% 50%;text-align:right;transform:scaleX(0.986);">46.800</div>
<div class="t" style="top:235px;height:14px;line-height:14px;font-size:9.7px;color:#000;right:908.7px;transform-origin:100% 50%;text-align:right;transform:scaleX(0.986);">46.800</div>
<div class="t" style="top:235px;height:14px;line-height:14px;font-size:9.7px;color:#000;right:807.7px;transform-origin:100% 50%;text-align:right;transform:scaleX(0.986);">46.800</div>
<div class="t" style="top:235px;height:14px;line-height:14px;font-size:9.7px;color:#000;right:706.7px;transform-origin:100% 50%;text-align:right;transform:scaleX(0.973);">0</div>
<div class="t" style="top:235px;height:14px;line-height:14px;font-size:9.7px;color:#000;right:605.2px;transform-origin:100% 50%;text-align:right;transform:scaleX(0.973);">0</div>
<div class="t" style="top:235px;height:14px;line-height:14px;font-size:9.7px;color:#000;right:504.2px;transform-origin:100% 50%;text-align:right;transform:scaleX(0.973);">0</div>
<div class="t" style="top:235px;height:14px;line-height:14px;font-size:9.7px;color:#000;right:403.3px;transform-origin:100% 50%;text-align:right;transform:scaleX(0.986);">46.800</div>
<svg style="left:0;top:0" width="1435" height="853" viewBox="0 0 1435 853"><rect x="18.5" y="261.45" width="113" height="1.3" fill="#b6b6b6"/></svg>
<i class="cb" style="left:90px;top:251.8px"></i>
<div class="t" style="top:250px;height:14px;line-height:14px;font-size:9.7px;color:#000;font-weight:bold;right:1304.4px;transform-origin:100% 50%;text-align:right;transform:scaleX(0.973);">200040</div>
<div class="t" style="top:250px;height:14px;line-height:14px;font-size:9.7px;color:#000;right:1010.2px;transform-origin:100% 50%;text-align:right;transform:scaleX(0.973);">1</div>
<div class="t" style="top:250px;height:14px;line-height:14px;font-size:9.7px;color:#000;right:908.7px;transform-origin:100% 50%;text-align:right;transform:scaleX(0.973);">1</div>
<div class="t" style="top:250px;height:14px;line-height:14px;font-size:9.7px;color:#000;right:807.7px;transform-origin:100% 50%;text-align:right;transform:scaleX(0.973);">1</div>
<div class="t" style="top:250px;height:14px;line-height:14px;font-size:9.7px;color:#000;right:706.7px;transform-origin:100% 50%;text-align:right;transform:scaleX(0.973);">0</div>
<div class="t" style="top:250px;height:14px;line-height:14px;font-size:9.7px;color:#000;right:605.2px;transform-origin:100% 50%;text-align:right;transform:scaleX(0.973);">0</div>
<div class="t" style="top:250px;height:14px;line-height:14px;font-size:9.7px;color:#000;right:504.2px;transform-origin:100% 50%;text-align:right;transform:scaleX(0.973);">0</div>
<div class="t" style="top:250px;height:14px;line-height:14px;font-size:9.7px;color:#000;right:403.3px;transform-origin:100% 50%;text-align:right;transform:scaleX(0.973);">1</div>
<svg style="left:0;top:0" width="1435" height="853" viewBox="0 0 1435 853"><rect x="18.5" y="276.45" width="113" height="1.3" fill="#b6b6b6"/></svg>
<i class="cb" style="left:90px;top:266.8px"></i>
<div class="t" style="top:265px;height:14px;line-height:14px;font-size:9.7px;color:#000;font-weight:bold;right:1304.4px;transform-origin:100% 50%;text-align:right;transform:scaleX(0.99);">200110</div>
<div class="t" style="top:265px;height:14px;line-height:14px;font-size:9.7px;color:#000;right:1010.2px;transform-origin:100% 50%;text-align:right;transform:scaleX(0.986);">75.707</div>
<div class="t" style="top:265px;height:14px;line-height:14px;font-size:9.7px;color:#000;right:908.7px;transform-origin:100% 50%;text-align:right;transform:scaleX(0.986);">79.907</div>
<div class="t" style="top:265px;height:14px;line-height:14px;font-size:9.7px;color:#000;right:807.7px;transform-origin:100% 50%;text-align:right;transform:scaleX(1.01);">75.211</div>
<div class="t" style="top:265px;height:14px;line-height:14px;font-size:9.7px;color:#000;right:706.7px;transform-origin:100% 50%;text-align:right;transform:scaleX(0.986);">13.150</div>
<div class="t" style="top:265px;height:14px;line-height:14px;font-size:9.7px;color:#000;right:605.2px;transform-origin:100% 50%;text-align:right;transform:scaleX(0.989);">8.454</div>
<div class="t" style="top:265px;height:14px;line-height:14px;font-size:9.7px;color:#000;right:504.2px;transform-origin:100% 50%;text-align:right;transform:scaleX(0.989);">4.696</div>
<div class="t" style="top:265px;height:14px;line-height:14px;font-size:9.7px;color:#000;right:403.3px;transform-origin:100% 50%;text-align:right;transform:scaleX(0.986);">71.453</div>
<svg style="left:0;top:0" width="1435" height="853" viewBox="0 0 1435 853"><rect x="18.5" y="291.45" width="113" height="1.3" fill="#b6b6b6"/></svg>
<i class="cb" style="left:90px;top:281.8px"></i>
<div class="t" style="top:280px;height:14px;line-height:14px;font-size:9.7px;color:#000;font-weight:bold;right:1304.4px;transform-origin:100% 50%;text-align:right;transform:scaleX(0.973);">200120</div>
<div class="t" style="top:280px;height:14px;line-height:14px;font-size:9.7px;color:#000;right:1010.2px;transform-origin:100% 50%;text-align:right;transform:scaleX(0.986);">56.500</div>
<div class="t" style="top:280px;height:14px;line-height:14px;font-size:9.7px;color:#000;right:908.7px;transform-origin:100% 50%;text-align:right;transform:scaleX(0.986);">56.500</div>
<div class="t" style="top:280px;height:14px;line-height:14px;font-size:9.7px;color:#000;right:807.7px;transform-origin:100% 50%;text-align:right;transform:scaleX(0.986);">56.500</div>
<div class="t" style="top:280px;height:14px;line-height:14px;font-size:9.7px;color:#000;right:605.2px;transform-origin:100% 50%;text-align:right;transform:scaleX(0.973);">0</div>
<div class="t" style="top:280px;height:14px;line-height:14px;font-size:9.7px;color:#000;right:403.3px;transform-origin:100% 50%;text-align:right;transform:scaleX(0.986);">56.500</div>
<svg style="left:0;top:0" width="1435" height="853" viewBox="0 0 1435 853"><rect x="18.5" y="306.45" width="113" height="1.3" fill="#b6b6b6"/></svg>
<i class="cb" style="left:90px;top:296.8px"></i>
<div class="t" style="top:295px;height:14px;line-height:14px;font-size:9.7px;color:#000;font-weight:bold;right:1304.4px;transform-origin:100% 50%;text-align:right;transform:scaleX(0.973);">200130</div>
<div class="t" style="top:295px;height:14px;line-height:14px;font-size:9.7px;color:#000;right:1010.2px;transform-origin:100% 50%;text-align:right;transform:scaleX(0.973);">0</div>
<div class="t" style="top:295px;height:14px;line-height:14px;font-size:9.7px;color:#000;right:908.7px;transform-origin:100% 50%;text-align:right;transform:scaleX(0.973);">0</div>
<div class="t" style="top:295px;height:14px;line-height:14px;font-size:9.7px;color:#000;right:605.2px;transform-origin:100% 50%;text-align:right;transform:scaleX(0.973);">0</div>
<svg style="left:0;top:0" width="1435" height="853" viewBox="0 0 1435 853"><rect x="18.5" y="321.45" width="113" height="1.3" fill="#b6b6b6"/></svg>
<i class="cb" style="left:90px;top:311.8px"></i>
<div class="t" style="top:310px;height:14px;line-height:14px;font-size:9.7px;color:#000;font-weight:bold;right:1304.4px;transform-origin:100% 50%;text-align:right;transform:scaleX(0.973);">200140</div>
<div class="t" style="top:310px;height:14px;line-height:14px;font-size:9.7px;color:#000;right:1010.2px;transform-origin:100% 50%;text-align:right;transform:scaleX(0.986);">40.000</div>
<div class="t" style="top:310px;height:14px;line-height:14px;font-size:9.7px;color:#000;right:908.7px;transform-origin:100% 50%;text-align:right;transform:scaleX(0.986);">40.000</div>
<div class="t" style="top:310px;height:14px;line-height:14px;font-size:9.7px;color:#000;right:807.7px;transform-origin:100% 50%;text-align:right;transform:scaleX(0.986);">40.000</div>
<div class="t" style="top:310px;height:14px;line-height:14px;font-size:9.7px;color:#000;right:605.2px;transform-origin:100% 50%;text-align:right;transform:scaleX(0.973);">0</div>
<div class="t" style="top:310px;height:14px;line-height:14px;font-size:9.7px;color:#000;right:403.3px;transform-origin:100% 50%;text-align:right;transform:scaleX(0.986);">40.000</div>
<svg style="left:0;top:0" width="1435" height="853" viewBox="0 0 1435 853"><rect x="18.5" y="336.45" width="113" height="1.3" fill="#b6b6b6"/></svg>
<i class="cb" style="left:90px;top:326.8px"></i>
<div class="t" style="top:325px;height:14px;line-height:14px;font-size:9.7px;color:#000;font-weight:bold;right:1304.4px;transform-origin:100% 50%;text-align:right;transform:scaleX(0.973);">200150</div>
<div class="t" style="top:325px;height:14px;line-height:14px;font-size:9.7px;color:#000;right:1010.2px;transform-origin:100% 50%;text-align:right;transform:scaleX(0.973);">0</div>
<div class="t" style="top:325px;height:14px;line-height:14px;font-size:9.7px;color:#000;right:908.7px;transform-origin:100% 50%;text-align:right;transform:scaleX(0.973);">0</div>
<div class="t" style="top:325px;height:14px;line-height:14px;font-size:9.7px;color:#000;right:605.2px;transform-origin:100% 50%;text-align:right;transform:scaleX(0.973);">0</div>
<svg style="left:0;top:0" width="1435" height="853" viewBox="0 0 1435 853"><rect x="18.5" y="351.45" width="113" height="1.3" fill="#b6b6b6"/></svg>
<i class="cb" style="left:90px;top:341.8px"></i>
<div class="t" style="top:340px;height:14px;line-height:14px;font-size:9.7px;color:#000;font-weight:bold;right:1304.4px;transform-origin:100% 50%;text-align:right;transform:scaleX(0.973);">200160</div>
<div class="t" style="top:340px;height:14px;line-height:14px;font-size:9.7px;color:#000;right:1010.2px;transform-origin:100% 50%;text-align:right;transform:scaleX(0.986);">16.500</div>
<div class="t" style="top:340px;height:14px;line-height:14px;font-size:9.7px;color:#000;right:908.7px;transform-origin:100% 50%;text-align:right;transform:scaleX(0.986);">16.500</div>
<div class="t" style="top:340px;height:14px;line-height:14px;font-size:9.7px;color:#000;right:807.7px;transform-origin:100% 50%;text-align:right;transform:scaleX(0.986);">16.500</div>
<div class="t" style="top:340px;height:14px;line-height:14px;font-size:9.7px;color:#000;right:605.2px;transform-origin:100% 50%;text-align:right;transform:scaleX(0.973);">0</div>
<div class="t" style="top:340px;height:14px;line-height:14px;font-size:9.7px;color:#000;right:403.3px;transform-origin:100% 50%;text-align:right;transform:scaleX(0.986);">16.500</div>
<svg style="left:0;top:0" width="1435" height="853" viewBox="0 0 1435 853"><rect x="18.5" y="366.45" width="113" height="1.3" fill="#b6b6b6"/></svg>
<i class="cb" style="left:90px;top:356.8px"></i>
<div class="t" style="top:355px;height:14px;line-height:14px;font-size:9.7px;color:#000;font-weight:bold;right:1304.4px;transform-origin:100% 50%;text-align:right;transform:scaleX(0.973);">200170</div>
<div class="t" style="top:355px;height:14px;line-height:14px;font-size:9.7px;color:#000;right:1010.2px;transform-origin:100% 50%;text-align:right;transform:scaleX(0.973);">0</div>
<div class="t" style="top:355px;height:14px;line-height:14px;font-size:9.7px;color:#000;right:908.7px;transform-origin:100% 50%;text-align:right;transform:scaleX(0.973);">0</div>
<div class="t" style="top:355px;height:14px;line-height:14px;font-size:9.7px;color:#000;right:605.2px;transform-origin:100% 50%;text-align:right;transform:scaleX(0.973);">0</div>
<svg style="left:0;top:0" width="1435" height="853" viewBox="0 0 1435 853"><rect x="18.5" y="381.45" width="113" height="1.3" fill="#b6b6b6"/></svg>
<i class="cb" style="left:90px;top:371.8px"></i>
<div class="t" style="top:370px;height:14px;line-height:14px;font-size:9.7px;color:#000;font-weight:bold;right:1304.4px;transform-origin:100% 50%;text-align:right;transform:scaleX(0.973);">200180</div>
<div class="t" style="top:370px;height:14px;line-height:14px;font-size:9.7px;color:#000;right:1010.2px;transform-origin:100% 50%;text-align:right;transform:scaleX(0.973);">0</div>
<div class="t" style="top:370px;height:14px;line-height:14px;font-size:9.7px;color:#000;right:908.7px;transform-origin:100% 50%;text-align:right;transform:scaleX(0.973);">0</div>
<div class="t" style="top:370px;height:14px;line-height:14px;font-size:9.7px;color:#000;right:605.2px;transform-origin:100% 50%;text-align:right;transform:scaleX(0.973);">0</div>
<svg style="left:0;top:0" width="1435" height="853" viewBox="0 0 1435 853"><rect x="18.5" y="396.45" width="113" height="1.3" fill="#b6b6b6"/></svg>
<i class="cb" style="left:90px;top:386.8px"></i>
<div class="t" style="top:385px;height:14px;line-height:14px;font-size:9.7px;color:#000;font-weight:bold;right:1304.4px;transform-origin:100% 50%;text-align:right;transform:scaleX(0.973);">200190</div>
<div class="t" style="top:385px;height:14px;line-height:14px;font-size:9.7px;color:#000;right:1010.2px;transform-origin:100% 50%;text-align:right;transform:scaleX(0.973);">0</div>
<div class="t" style="top:385px;height:14px;line-height:14px;font-size:9.7px;color:#000;right:908.7px;transform-origin:100% 50%;text-align:right;transform:scaleX(0.973);">0</div>
<div class="t" style="top:385px;height:14px;line-height:14px;font-size:9.7px;color:#000;right:605.2px;transform-origin:100% 50%;text-align:right;transform:scaleX(0.973);">0</div>
<svg style="left:0;top:0" width="1435" height="853" viewBox="0 0 1435 853"><rect x="18.5" y="411.45" width="113" height="1.3" fill="#b6b6b6"/></svg>
<i class="cb" style="left:90px;top:401.8px"></i>
<div class="t" style="top:400px;height:14px;line-height:14px;font-size:9.7px;color:#000;font-weight:bold;right:1304.4px;transform-origin:100% 50%;text-align:right;transform:scaleX(0.973);">200200</div>
<div class="t" style="top:400px;height:14px;line-height:14px;font-size:9.7px;color:#000;right:1010.2px;transform-origin:100% 50%;text-align:right;transform:scaleX(0.973);">0</div>
<div class="t" style="top:400px;height:14px;line-height:14px;font-size:9.7px;color:#000;right:908.7px;transform-origin:100% 50%;text-align:right;transform:scaleX(0.973);">0</div>
<div class="t" style="top:400px;height:14px;line-height:14px;font-size:9.7px;color:#000;right:605.2px;transform-origin:100% 50%;text-align:right;transform:scaleX(0.973);">0</div>
<svg style="left:0;top:0" width="1435" height="853" viewBox="0 0 1435 853"><rect x="18.5" y="426.45" width="113" height="1.3" fill="#b6b6b6"/></svg>
<i class="cb" style="left:90px;top:416.8px"></i>
<div class="t" style="top:415px;height:14px;line-height:14px;font-size:9.7px;color:#000;font-weight:bold;right:1304.4px;transform-origin:100% 50%;text-align:right;transform:scaleX(0.973);">200301</div>
<div class="t" style="top:415px;height:14px;line-height:14px;font-size:9.7px;color:#000;right:1010.2px;transform-origin:100% 50%;text-align:right;transform:scaleX(0.973);">0</div>
<div class="t" style="top:415px;height:14px;line-height:14px;font-size:9.7px;color:#000;right:908.7px;transform-origin:100% 50%;text-align:right;transform:scaleX(0.989);">4.200</div>
<div class="t" style="top:415px;height:14px;line-height:14px;font-size:9.7px;color:#000;right:807.7px;transform-origin:100% 50%;text-align:right;transform:scaleX(0.989);">4.200</div>
<div class="t" style="top:415px;height:14px;line-height:14px;font-size:9.7px;color:#000;right:605.2px;transform-origin:100% 50%;text-align:right;transform:scaleX(0.973);">0</div>
<div class="t" style="top:415px;height:14px;line-height:14px;font-size:9.7px;color:#000;right:403.3px;transform-origin:100% 50%;text-align:right;transform:scaleX(0.989);">4.200</div>
<svg style="left:0;top:0" width="1435" height="853" viewBox="0 0 1435 853"><rect x="18.5" y="441.45" width="113" height="1.3" fill="#b6b6b6"/></svg>
<i class="cb" style="left:90px;top:431.8px"></i>
<div class="t" style="top:430px;height:14px;line-height:14px;font-size:9.7px;color:#000;font-weight:bold;right:1304.4px;transform-origin:100% 50%;text-align:right;transform:scaleX(0.973);">200410</div>
<div class="t" style="top:430px;height:14px;line-height:14px;font-size:9.7px;color:#000;right:1010.2px;transform-origin:100% 50%;text-align:right;transform:scaleX(0.986);">12.602</div>
<div class="t" style="top:430px;height:14px;line-height:14px;font-size:9.7px;color:#000;right:908.7px;transform-origin:100% 50%;text-align:right;transform:scaleX(0.986);">12.602</div>
<div class="t" style="top:430px;height:14px;line-height:14px;font-size:9.7px;color:#000;right:807.7px;transform-origin:100% 50%;text-align:right;transform:scaleX(0.989);">5.418</div>
<div class="t" style="top:430px;height:14px;line-height:14px;font-size:9.7px;color:#000;right:706.7px;transform-origin:100% 50%;text-align:right;transform:scaleX(0.986);">12.600</div>
<div class="t" style="top:430px;height:14px;line-height:14px;font-size:9.7px;color:#000;right:605.2px;transform-origin:100% 50%;text-align:right;transform:scaleX(0.989);">5.416</div>
<div class="t" style="top:430px;height:14px;line-height:14px;font-size:9.7px;color:#000;right:504.2px;transform-origin:100% 50%;text-align:right;transform:scaleX(0.989);">7.184</div>
<div class="t" style="top:430px;height:14px;line-height:14px;font-size:9.7px;color:#000;right:403.3px;transform-origin:100% 50%;text-align:right;transform:scaleX(0.989);">7.186</div>
<svg style="left:0;top:0" width="1435" height="853" viewBox="0 0 1435 853"><rect x="18.5" y="456.45" width="113" height="1.3" fill="#b6b6b6"/></svg>
<i class="cb" style="left:90px;top:446.8px"></i>
<div class="t" style="top:445px;height:14px;line-height:14px;font-size:9.7px;color:#000;font-weight:bold;right:1304.4px;transform-origin:100% 50%;text-align:right;transform:scaleX(0.973);">200420</div>
<div class="t" style="top:445px;height:14px;line-height:14px;font-size:9.7px;color:#000;right:1010.2px;transform-origin:100% 50%;text-align:right;transform:scaleX(0.989);">5.501</div>
<div class="t" style="top:445px;height:14px;line-height:14px;font-size:9.7px;color:#000;right:908.7px;transform-origin:100% 50%;text-align:right;transform:scaleX(0.989);">5.501</div>
<div class="t" style="top:445px;height:14px;line-height:14px;font-size:9.7px;color:#000;right:807.7px;transform-origin:100% 50%;text-align:right;transform:scaleX(0.989);">5.417</div>
<div class="t" style="top:445px;height:14px;line-height:14px;font-size:9.7px;color:#000;right:706.7px;transform-origin:100% 50%;text-align:right;transform:scaleX(0.989);">5.500</div>
<div class="t" style="top:445px;height:14px;line-height:14px;font-size:9.7px;color:#000;right:605.2px;transform-origin:100% 50%;text-align:right;transform:scaleX(0.989);">5.416</div>
<div class="t" style="top:445px;height:14px;line-height:14px;font-size:9.7px;color:#000;right:504.2px;transform-origin:100% 50%;text-align:right;transform:scaleX(0.973);">84</div>
<div class="t" style="top:445px;height:14px;line-height:14px;font-size:9.7px;color:#000;right:403.3px;transform-origin:100% 50%;text-align:right;transform:scaleX(0.973);">85</div>
<svg style="left:0;top:0" width="1435" height="853" viewBox="0 0 1435 853"><rect x="18.5" y="471.45" width="113" height="1.3" fill="#b6b6b6"/></svg>
<i class="cb" style="left:90px;top:461.8px"></i>
<div class="t" style="top:460px;height:14px;line-height:14px;font-size:9.7px;color:#000;font-weight:bold;right:1304.4px;transform-origin:100% 50%;text-align:right;transform:scaleX(0.973);">200500</div>
<div class="t" style="top:460px;height:14px;line-height:14px;font-size:9.7px;color:#000;right:1010.2px;transform-origin:100% 50%;text-align:right;transform:scaleX(0.989);">7.101</div>
<div class="t" style="top:460px;height:14px;line-height:14px;font-size:9.7px;color:#000;right:908.7px;transform-origin:100% 50%;text-align:right;transform:scaleX(0.989);">7.101</div>
<div class="t" style="top:460px;height:14px;line-height:14px;font-size:9.7px;color:#000;right:807.7px;transform-origin:100% 50%;text-align:right;transform:scaleX(0.973);">1</div>
<div class="t" style="top:460px;height:14px;line-height:14px;font-size:9.7px;color:#000;right:706.7px;transform-origin:100% 50%;text-align:right;transform:scaleX(0.989);">7.100</div>
<div class="t" style="top:460px;height:14px;line-height:14px;font-size:9.7px;color:#000;right:605.2px;transform-origin:100% 50%;text-align:right;transform:scaleX(0.973);">0</div>
<div class="t" style="top:460px;height:14px;line-height:14px;font-size:9.7px;color:#000;right:504.2px;transform-origin:100% 50%;text-align:right;transform:scaleX(0.989);">7.100</div>
<div class="t" style="top:460px;height:14px;line-height:14px;font-size:9.7px;color:#000;right:403.3px;transform-origin:100% 50%;text-align:right;transform:scaleX(0.989);">7.101</div>
<svg style="left:0;top:0" width="1435" height="853" viewBox="0 0 1435 853"><rect x="18.5" y="486.45" width="113" height="1.3" fill="#b6b6b6"/></svg>
<i class="cb" style="left:90px;top:476.8px"></i>
<div class="t" style="top:475px;height:14px;line-height:14px;font-size:9.7px;color:#000;font-weight:bold;right:1304.4px;transform-origin:100% 50%;text-align:right;transform:scaleX(0.973);">200510</div>
<div class="t" style="top:475px;height:14px;line-height:14px;font-size:9.7px;color:#000;right:1010.2px;transform-origin:100% 50%;text-align:right;transform:scaleX(0.973);">1</div>
<div class="t" style="top:475px;height:14px;line-height:14px;font-size:9.7px;color:#000;right:908.7px;transform-origin:100% 50%;text-align:right;transform:scaleX(0.973);">1</div>
<div class="t" style="top:475px;height:14px;line-height:14px;font-size:9.7px;color:#000;right:807.7px;transform-origin:100% 50%;text-align:right;transform:scaleX(0.973);">1</div>
<div class="t" style="top:475px;height:14px;line-height:14px;font-size:9.7px;color:#000;right:706.7px;transform-origin:100% 50%;text-align:right;transform:scaleX(0.973);">0</div>
<div class="t" style="top:475px;height:14px;line-height:14px;font-size:9.7px;color:#000;right:605.2px;transform-origin:100% 50%;text-align:right;transform:scaleX(0.973);">0</div>
<div class="t" style="top:475px;height:14px;line-height:14px;font-size:9.7px;color:#000;right:504.2px;transform-origin:100% 50%;text-align:right;transform:scaleX(0.973);">0</div>
<div class="t" style="top:475px;height:14px;line-height:14px;font-size:9.7px;color:#000;right:403.3px;transform-origin:100% 50%;text-align:right;transform:scaleX(0.973);">1</div>
<svg style="left:0;top:0" width="1435" height="853" viewBox="0 0 1435 853"><rect x="18.5" y="501.45" width="113" height="1.3" fill="#b6b6b6"/></svg>
<i class="cb" style="left:90px;top:491.8px"></i>
<div class="t" style="top:490px;height:14px;line-height:14px;font-size:9.7px;color:#000;font-weight:bold;right:1304.4px;transform-origin:100% 50%;text-align:right;transform:scaleX(0.973);">200520</div>
<div class="t" style="top:490px;height:14px;line-height:14px;font-size:9.7px;color:#000;right:1010.2px;transform-origin:100% 50%;text-align:right;transform:scaleX(0.973);">1</div>
<div class="t" style="top:490px;height:14px;line-height:14px;font-size:9.7px;color:#000;right:908.7px;transform-origin:100% 50%;text-align:right;transform:scaleX(0.973);">1</div>
<div class="t" style="top:490px;height:14px;line-height:14px;font-size:9.7px;color:#000;right:807.7px;transform-origin:100% 50%;text-align:right;transform:scaleX(0.973);">1</div>
<div class="t" style="top:490px;height:14px;line-height:14px;font-size:9.7px;color:#000;right:706.7px;transform-origin:100% 50%;text-align:right;transform:scaleX(0.973);">0</div>
<div class="t" style="top:490px;height:14px;line-height:14px;font-size:9.7px;color:#000;right:605.2px;transform-origin:100% 50%;text-align:right;transform:scaleX(0.973);">0</div>
<div class="t" style="top:490px;height:14px;line-height:14px;font-size:9.7px;color:#000;right:504.2px;transform-origin:100% 50%;text-align:right;transform:scaleX(0.973);">0</div>
<div class="t" style="top:490px;height:14px;line-height:14px;font-size:9.7px;color:#000;right:403.3px;transform-origin:100% 50%;text-align:right;transform:scaleX(0.973);">1</div>
<svg style="left:0;top:0" width="1435" height="853" viewBox="0 0 1435 853"><rect x="18.5" y="516.45" width="113" height="1.3" fill="#b6b6b6"/></svg>
<i class="cb" style="left:90px;top:506.8px"></i>
<div class="t" style="top:505px;height:14px;line-height:14px;font-size:9.7px;color:#000;font-weight:bold;right:1304.4px;transform-origin:100% 50%;text-align:right;transform:scaleX(0.973);">200530</div>
<div class="t" style="top:505px;height:14px;line-height:14px;font-size:9.7px;color:#000;right:1010.2px;transform-origin:100% 50%;text-align:right;transform:scaleX(0.973);">0</div>
<div class="t" style="top:505px;height:14px;line-height:14px;font-size:9.7px;color:#000;right:908.7px;transform-origin:100% 50%;text-align:right;transform:scaleX(0.989);">6.654</div>
<div class="t" style="top:505px;height:14px;line-height:14px;font-size:9.7px;color:#000;right:807.7px;transform-origin:100% 50%;text-align:right;transform:scaleX(0.989);">6.654</div>
<div class="t" style="top:505px;height:14px;line-height:14px;font-size:9.7px;color:#000;right:706.7px;transform-origin:100% 50%;text-align:right;transform:scaleX(0.973);">0</div>
<div class="t" style="top:505px;height:14px;line-height:14px;font-size:9.7px;color:#000;right:605.2px;transform-origin:100% 50%;text-align:right;transform:scaleX(0.973);">0</div>
<div class="t" style="top:505px;height:14px;line-height:14px;font-size:9.7px;color:#000;right:504.2px;transform-origin:100% 50%;text-align:right;transform:scaleX(0.973);">0</div>
<div class="t" style="top:505px;height:14px;line-height:14px;font-size:9.7px;color:#000;right:403.3px;transform-origin:100% 50%;text-align:right;transform:scaleX(0.989);">6.654</div>
<svg style="left:0;top:0" width="1435" height="853" viewBox="0 0 1435 853"><rect x="18.5" y="531.45" width="113" height="1.3" fill="#b6b6b6"/></svg>
<i class="cb" style="left:90px;top:521.8px"></i>
<div class="t" style="top:520px;height:14px;line-height:14px;font-size:9.7px;color:#000;font-weight:bold;right:1304.4px;transform-origin:100% 50%;text-align:right;transform:scaleX(0.973);">200540</div>
<div class="t" style="top:520px;height:14px;line-height:14px;font-size:9.7px;color:#000;right:1010.2px;transform-origin:100% 50%;text-align:right;transform:scaleX(0.973);">1</div>
<div class="t" style="top:520px;height:14px;line-height:14px;font-size:9.7px;color:#000;right:908.7px;transform-origin:100% 50%;text-align:right;transform:scaleX(0.973);">1</div>
<div class="t" style="top:520px;height:14px;line-height:14px;font-size:9.7px;color:#000;right:807.7px;transform-origin:100% 50%;text-align:right;transform:scaleX(0.973);">1</div>
<div class="t" style="top:520px;height:14px;line-height:14px;font-size:9.7px;color:#000;right:706.7px;transform-origin:100% 50%;text-align:right;transform:scaleX(0.973);">0</div>
<div class="t" style="top:520px;height:14px;line-height:14px;font-size:9.7px;color:#000;right:605.2px;transform-origin:100% 50%;text-align:right;transform:scaleX(0.973);">0</div>
<div class="t" style="top:520px;height:14px;line-height:14px;font-size:9.7px;color:#000;right:504.2px;transform-origin:100% 50%;text-align:right;transform:scaleX(0.973);">0</div>
<div class="t" style="top:520px;height:14px;line-height:14px;font-size:9.7px;color:#000;right:403.3px;transform-origin:100% 50%;text-align:right;transform:scaleX(0.973);">1</div>
<svg style="left:0;top:0" width="1435" height="853" viewBox="0 0 1435 853"><rect x="18.5" y="546.45" width="113" height="1.3" fill="#b6b6b6"/></svg>
<i class="cb" style="left:90px;top:536.8px"></i>
<div class="t" style="top:535px;height:14px;line-height:14px;font-size:9.7px;color:#000;font-weight:bold;right:1304.4px;transform-origin:100% 50%;text-align:right;transform:scaleX(0.973);">200550</div>
<div class="t" style="top:535px;height:14px;line-height:14px;font-size:9.7px;color:#000;right:1010.2px;transform-origin:100% 50%;text-align:right;transform:scaleX(0.989);">6.600</div>
<div class="t" style="top:535px;height:14px;line-height:14px;font-size:9.7px;color:#000;right:908.7px;transform-origin:100% 50%;text-align:right;transform:scaleX(0.989);">6.600</div>
<div class="t" style="top:535px;height:14px;line-height:14px;font-size:9.7px;color:#000;right:807.7px;transform-origin:100% 50%;text-align:right;transform:scaleX(0.989);">9.088</div>
<div class="t" style="top:535px;height:14px;line-height:14px;font-size:9.7px;color:#000;right:706.7px;transform-origin:100% 50%;text-align:right;transform:scaleX(0.973);">550</div>
<div class="t" style="top:535px;height:14px;line-height:14px;font-size:9.7px;color:#000;right:605.2px;transform-origin:100% 50%;text-align:right;transform:scaleX(0.989);">3.038</div>
<div class="t" style="top:535px;height:14px;line-height:14px;font-size:9.7px;color:#000;right:504.2px;transform-origin:100% 50%;text-align:right;transform:scaleX(0.982);">-2.488</div>
<div class="t" style="top:535px;height:14px;line-height:14px;font-size:9.7px;color:#000;right:403.3px;transform-origin:100% 50%;text-align:right;transform:scaleX(0.989);">3.562</div>
<svg style="left:0;top:0" width="1435" height="853" viewBox="0 0 1435 853"><rect x="18.5" y="561.45" width="113" height="1.3" fill="#b6b6b6"/></svg>
<i class="cb" style="left:90px;top:551.8px"></i>
<div class="t" style="top:550px;height:14px;line-height:14px;font-size:9.7px;color:#000;font-weight:bold;right:1304.4px;transform-origin:100% 50%;text-align:right;transform:scaleX(0.973);">200560</div>
<div class="t" style="top:550px;height:14px;line-height:14px;font-size:9.7px;color:#000;right:1010.2px;transform-origin:100% 50%;text-align:right;transform:scaleX(0.973);">1</div>
<div class="t" style="top:550px;height:14px;line-height:14px;font-size:9.7px;color:#000;right:908.7px;transform-origin:100% 50%;text-align:right;transform:scaleX(0.973);">1</div>
<div class="t" style="top:550px;height:14px;line-height:14px;font-size:9.7px;color:#000;right:807.7px;transform-origin:100% 50%;text-align:right;transform:scaleX(0.973);">1</div>
<div class="t" style="top:550px;height:14px;line-height:14px;font-size:9.7px;color:#000;right:706.7px;transform-origin:100% 50%;text-align:right;transform:scaleX(0.973);">0</div>
<div class="t" style="top:550px;height:14px;line-height:14px;font-size:9.7px;color:#000;right:605.2px;transform-origin:100% 50%;text-align:right;transform:scaleX(0.973);">0</div>
<div class="t" style="top:550px;height:14px;line-height:14px;font-size:9.7px;color:#000;right:504.2px;transform-origin:100% 50%;text-align:right;transform:scaleX(0.973);">0</div>
<div class="t" style="top:550px;height:14px;line-height:14px;font-size:9.7px;color:#000;right:403.3px;transform-origin:100% 50%;text-align:right;transform:scaleX(0.973);">1</div>
<svg style="left:0;top:0" width="1435" height="853" viewBox="0 0 1435 853"><rect x="18.5" y="576.45" width="113" height="1.3" fill="#b6b6b6"/></svg>
<i class="cb" style="left:90px;top:566.8px"></i>
<div class="t" style="top:565px;height:14px;line-height:14px;font-size:9.7px;color:#000;font-weight:bold;right:1304.4px;transform-origin:100% 50%;text-align:right;transform:scaleX(0.973);">200570</div>
<div class="t" style="top:565px;height:14px;line-height:14px;font-size:9.7px;color:#000;right:1010.2px;transform-origin:100% 50%;text-align:right;transform:scaleX(0.973);">1</div>
<div class="t" style="top:565px;height:14px;line-height:14px;font-size:9.7px;color:#000;right:908.7px;transform-origin:100% 50%;text-align:right;transform:scaleX(0.973);">1</div>
<div class="t" style="top:565px;height:14px;line-height:14px;font-size:9.7px;color:#000;right:807.7px;transform-origin:100% 50%;text-align:right;transform:scaleX(0.973);">1</div>
<div class="t" style="top:565px;height:14px;line-height:14px;font-size:9.7px;color:#000;right:706.7px;transform-origin:100% 50%;text-align:right;transform:scaleX(0.973);">0</div>
<div class="t" style="top:565px;height:14px;line-height:14px;font-size:9.7px;color:#000;right:605.2px;transform-origin:100% 50%;text-align:right;transform:scaleX(0.973);">0</div>
<div class="t" style="top:565px;height:14px;line-height:14px;font-size:9.7px;color:#000;right:504.2px;transform-origin:100% 50%;text-align:right;transform:scaleX(0.973);">0</div>
<div class="t" style="top:565px;height:14px;line-height:14px;font-size:9.7px;color:#000;right:403.3px;transform-origin:100% 50%;text-align:right;transform:scaleX(0.973);">1</div>
<svg style="left:0;top:0" width="1435" height="853" viewBox="0 0 1435 853"><rect x="18.5" y="591.45" width="113" height="1.3" fill="#b6b6b6"/></svg>
<i class="cb" style="left:90px;top:581.8px"></i>
<div class="t" style="top:580px;height:14px;line-height:14px;font-size:9.7px;color:#000;font-weight:bold;right:1304.4px;transform-origin:100% 50%;text-align:right;transform:scaleX(0.973);">300000</div>
<div class="t" style="top:580px;height:14px;line-height:14px;font-size:9.7px;color:#000;right:1010.2px;transform-origin:100% 50%;text-align:right;transform:scaleX(0.986);">61.094</div>
<div class="t" style="top:580px;height:14px;line-height:14px;font-size:9.7px;color:#000;right:908.7px;transform-origin:100% 50%;text-align:right;transform:scaleX(0.986);">56.894</div>
<div class="t" style="top:580px;height:14px;line-height:14px;font-size:9.7px;color:#000;right:807.7px;transform-origin:100% 50%;text-align:right;transform:scaleX(0.986);">61.590</div>
<div class="t" style="top:580px;height:14px;line-height:14px;font-size:9.7px;color:#000;right:706.7px;transform-origin:100% 50%;text-align:right;transform:scaleX(0.98);">-13.150</div>
<div class="t" style="top:580px;height:14px;line-height:14px;font-size:9.7px;color:#000;right:605.2px;transform-origin:100% 50%;text-align:right;transform:scaleX(0.982);">-8.454</div>
<div class="t" style="top:580px;height:14px;line-height:14px;font-size:9.7px;color:#000;right:504.2px;transform-origin:100% 50%;text-align:right;transform:scaleX(0.982);">-4.696</div>
<div class="t" style="top:580px;height:14px;line-height:14px;font-size:9.7px;color:#000;right:403.3px;transform-origin:100% 50%;text-align:right;transform:scaleX(0.986);">65.348</div>
<svg style="left:0;top:0" width="1435" height="853" viewBox="0 0 1435 853"><rect x="18.5" y="606.45" width="113" height="1.3" fill="#b6b6b6"/></svg>
<i class="cb" style="left:90px;top:596.8px"></i>
<div class="t" style="top:595px;height:14px;line-height:14px;font-size:9.7px;color:#000;font-weight:bold;right:1304.4px;transform-origin:100% 50%;text-align:right;transform:scaleX(0.973);">301000</div>
<div class="t" style="top:595px;height:14px;line-height:14px;font-size:9.7px;color:#000;right:1010.2px;transform-origin:100% 50%;text-align:right;transform:scaleX(0.973);">0</div>
<div class="t" style="top:595px;height:14px;line-height:14px;font-size:9.7px;color:#000;right:908.7px;transform-origin:100% 50%;text-align:right;transform:scaleX(0.973);">0</div>
<div class="t" style="top:595px;height:14px;line-height:14px;font-size:9.7px;color:#000;right:807.7px;transform-origin:100% 50%;text-align:right;transform:scaleX(0.973);">0</div>
<div class="t" style="top:595px;height:14px;line-height:14px;font-size:9.7px;color:#000;right:706.7px;transform-origin:100% 50%;text-align:right;transform:scaleX(0.973);">0</div>
<div class="t" style="top:595px;height:14px;line-height:14px;font-size:9.7px;color:#000;right:605.2px;transform-origin:100% 50%;text-align:right;transform:scaleX(0.973);">0</div>
<div class="t" style="top:595px;height:14px;line-height:14px;font-size:9.7px;color:#000;right:504.2px;transform-origin:100% 50%;text-align:right;transform:scaleX(0.973);">0</div>
<div class="t" style="top:595px;height:14px;line-height:14px;font-size:9.7px;color:#000;right:403.3px;transform-origin:100% 50%;text-align:right;transform:scaleX(0.973);">0</div>
<svg style="left:0;top:0" width="1435" height="853" viewBox="0 0 1435 853"><rect x="18.5" y="621.45" width="113" height="1.3" fill="#b6b6b6"/></svg>
<i class="cb" style="left:90px;top:611.8px"></i>
<div class="t" style="top:610px;height:14px;line-height:14px;font-size:9.7px;color:#000;font-weight:bold;right:1304.4px;transform-origin:100% 50%;text-align:right;transform:scaleX(0.973);">301010</div>
<div class="t" style="top:610px;height:14px;line-height:14px;font-size:9.7px;color:#000;right:1010.2px;transform-origin:100% 50%;text-align:right;transform:scaleX(0.986);">15.000</div>
<div class="t" style="top:610px;height:14px;line-height:14px;font-size:9.7px;color:#000;right:908.7px;transform-origin:100% 50%;text-align:right;transform:scaleX(0.986);">15.000</div>
<div class="t" style="top:610px;height:14px;line-height:14px;font-size:9.7px;color:#000;right:807.7px;transform-origin:100% 50%;text-align:right;transform:scaleX(0.986);">15.000</div>
<div class="t" style="top:610px;height:14px;line-height:14px;font-size:9.7px;color:#000;right:706.7px;transform-origin:100% 50%;text-align:right;transform:scaleX(0.973);">0</div>
<div class="t" style="top:610px;height:14px;line-height:14px;font-size:9.7px;color:#000;right:605.2px;transform-origin:100% 50%;text-align:right;transform:scaleX(0.973);">0</div>
<div class="t" style="top:610px;height:14px;line-height:14px;font-size:9.7px;color:#000;right:504.2px;transform-origin:100% 50%;text-align:right;transform:scaleX(0.973);">0</div>
<div class="t" style="top:610px;height:14px;line-height:14px;font-size:9.7px;color:#000;right:403.3px;transform-origin:100% 50%;text-align:right;transform:scaleX(0.986);">15.000</div>
<svg style="left:0;top:0" width="1435" height="853" viewBox="0 0 1435 853"><rect x="18.5" y="636.45" width="113" height="1.3" fill="#b6b6b6"/></svg>
<i class="cb" style="left:90px;top:626.8px"></i>
<div class="t" style="top:625px;height:14px;line-height:14px;font-size:9.7px;color:#000;font-weight:bold;right:1304.4px;transform-origin:100% 50%;text-align:right;transform:scaleX(0.973);">301020</div>
<div class="t" style="top:625px;height:14px;line-height:14px;font-size:9.7px;color:#000;right:1010.2px;transform-origin:100% 50%;text-align:right;transform:scaleX(0.986);">15.000</div>
<div class="t" style="top:625px;height:14px;line-height:14px;font-size:9.7px;color:#000;right:908.7px;transform-origin:100% 50%;text-align:right;transform:scaleX(0.986);">15.000</div>
<div class="t" style="top:625px;height:14px;line-height:14px;font-size:9.7px;color:#000;right:807.7px;transform-origin:100% 50%;text-align:right;transform:scaleX(0.986);">15.000</div>
<div class="t" style="top:625px;height:14px;line-height:14px;font-size:9.7px;color:#000;right:706.7px;transform-origin:100% 50%;text-align:right;transform:scaleX(0.973);">0</div>
<div class="t" style="top:625px;height:14px;line-height:14px;font-size:9.7px;color:#000;right:605.2px;transform-origin:100% 50%;text-align:right;transform:scaleX(0.973);">0</div>
<div class="t" style="top:625px;height:14px;line-height:14px;font-size:9.7px;color:#000;right:504.2px;transform-origin:100% 50%;text-align:right;transform:scaleX(0.973);">0</div>
<div class="t" style="top:625px;height:14px;line-height:14px;font-size:9.7px;color:#000;right:403.3px;transform-origin:100% 50%;text-align:right;transform:scaleX(0.986);">15.000</div>
<svg style="left:0;top:0" width="1435" height="853" viewBox="0 0 1435 853"><rect x="18.5" y="651.45" width="113" height="1.3" fill="#b6b6b6"/></svg>
<i class="cb" style="left:90px;top:641.8px"></i>
<div class="t" style="top:640px;height:14px;line-height:14px;font-size:9.7px;color:#000;font-weight:bold;right:1304.4px;transform-origin:100% 50%;text-align:right;transform:scaleX(0.973);">301030</div>
<div class="t" style="top:640px;height:14px;line-height:14px;font-size:9.7px;color:#000;right:1010.2px;transform-origin:100% 50%;text-align:right;transform:scaleX(0.973);">0</div>
<div class="t" style="top:640px;height:14px;line-height:14px;font-size:9.7px;color:#000;right:908.7px;transform-origin:100% 50%;text-align:right;transform:scaleX(0.973);">0</div>
<div class="t" style="top:640px;height:14px;line-height:14px;font-size:9.7px;color:#000;right:807.7px;transform-origin:100% 50%;text-align:right;transform:scaleX(0.973);">0</div>
<div class="t" style="top:640px;height:14px;line-height:14px;font-size:9.7px;color:#000;right:706.7px;transform-origin:100% 50%;text-align:right;transform:scaleX(0.973);">0</div>
<div class="t" style="top:640px;height:14px;line-height:14px;font-size:9.7px;color:#000;right:605.2px;transform-origin:100% 50%;text-align:right;transform:scaleX(0.973);">0</div>
<div class="t" style="top:640px;height:14px;line-height:14px;font-size:9.7px;color:#000;right:504.2px;transform-origin:100% 50%;text-align:right;transform:scaleX(0.973);">0</div>
<div class="t" style="top:640px;height:14px;line-height:14px;font-size:9.7px;color:#000;right:403.3px;transform-origin:100% 50%;text-align:right;transform:scaleX(0.973);">0</div>
<svg style="left:0;top:0" width="1435" height="853" viewBox="0 0 1435 853"><rect x="18.5" y="666.45" width="113" height="1.3" fill="#b6b6b6"/></svg>
<i class="cb" style="left:90px;top:656.8px"></i>
<div class="t" style="top:655px;height:14px;line-height:14px;font-size:9.7px;color:#000;font-weight:bold;right:1304.4px;transform-origin:100% 50%;text-align:right;transform:scaleX(0.973);">301040</div>
<div class="t" style="top:655px;height:14px;line-height:14px;font-size:9.7px;color:#000;right:1010.2px;transform-origin:100% 50%;text-align:right;transform:scaleX(0.986);">12.000</div>
<div class="t" style="top:655px;height:14px;line-height:14px;font-size:9.7px;color:#000;right:908.7px;transform-origin:100% 50%;text-align:right;transform:scaleX(0.986);">12.000</div>
<div class="t" style="top:655px;height:14px;line-height:14px;font-size:9.7px;color:#000;right:807.7px;transform-origin:100% 50%;text-align:right;transform:scaleX(0.986);">12.000</div>
<div class="t" style="top:655px;height:14px;line-height:14px;font-size:9.7px;color:#000;right:706.7px;transform-origin:100% 50%;text-align:right;transform:scaleX(0.973);">0</div>
<div class="t" style="top:655px;height:14px;line-height:14px;font-size:9.7px;color:#000;right:605.2px;transform-origin:100% 50%;text-align:right;transform:scaleX(0.973);">0</div>
<div class="t" style="top:655px;height:14px;line-height:14px;font-size:9.7px;color:#000;right:504.2px;transform-origin:100% 50%;text-align:right;transform:scaleX(0.973);">0</div>
<div class="t" style="top:655px;height:14px;line-height:14px;font-size:9.7px;color:#000;right:403.3px;transform-origin:100% 50%;text-align:right;transform:scaleX(0.986);">12.000</div>
<svg style="left:0;top:0" width="1435" height="853" viewBox="0 0 1435 853"><rect x="18.5" y="681.45" width="113" height="1.3" fill="#b6b6b6"/></svg>
<i class="cb" style="left:90px;top:671.8px"></i>
<div class="t" style="top:670px;height:14px;line-height:14px;font-size:9.7px;color:#000;font-weight:bold;right:1304.4px;transform-origin:100% 50%;text-align:right;transform:scaleX(0.973);">301050</div>
<div class="t" style="top:670px;height:14px;line-height:14px;font-size:9.7px;color:#000;right:1010.2px;transform-origin:100% 50%;text-align:right;transform:scaleX(0.986);">12.000</div>
<div class="t" style="top:670px;height:14px;line-height:14px;font-size:9.7px;color:#000;right:908.7px;transform-origin:100% 50%;text-align:right;transform:scaleX(0.986);">12.000</div>
<div class="t" style="top:670px;height:14px;line-height:14px;font-size:9.7px;color:#000;right:807.7px;transform-origin:100% 50%;text-align:right;transform:scaleX(0.986);">12.000</div>
<div class="t" style="top:670px;height:14px;line-height:14px;font-size:9.7px;color:#000;right:706.7px;transform-origin:100% 50%;text-align:right;transform:scaleX(0.973);">0</div>
<div class="t" style="top:670px;height:14px;line-height:14px;font-size:9.7px;color:#000;right:605.2px;transform-origin:100% 50%;text-align:right;transform:scaleX(0.973);">0</div>
<div class="t" style="top:670px;height:14px;line-height:14px;font-size:9.7px;color:#000;right:504.2px;transform-origin:100% 50%;text-align:right;transform:scaleX(0.973);">0</div>
<div class="t" style="top:670px;height:14px;line-height:14px;font-size:9.7px;color:#000;right:403.3px;transform-origin:100% 50%;text-align:right;transform:scaleX(0.986);">12.000</div>
<svg style="left:0;top:0" width="1435" height="853" viewBox="0 0 1435 853"><rect x="18.5" y="696.45" width="113" height="1.3" fill="#b6b6b6"/></svg>
<i class="cb" style="left:90px;top:686.8px"></i>
<div class="t" style="top:685px;height:14px;line-height:14px;font-size:9.7px;color:#000;font-weight:bold;right:1304.4px;transform-origin:100% 50%;text-align:right;transform:scaleX(0.973);">400000</div>
<div class="t" style="top:685px;height:14px;line-height:14px;font-size:9.7px;color:#000;right:1010.2px;transform-origin:100% 50%;text-align:right;transform:scaleX(0.986);">61.094</div>
<div class="t" style="top:685px;height:14px;line-height:14px;font-size:9.7px;color:#000;right:908.7px;transform-origin:100% 50%;text-align:right;transform:scaleX(0.986);">56.894</div>
<div class="t" style="top:685px;height:14px;line-height:14px;font-size:9.7px;color:#000;right:807.7px;transform-origin:100% 50%;text-align:right;transform:scaleX(0.986);">61.590</div>
<div class="t" style="top:685px;height:14px;line-height:14px;font-size:9.7px;color:#000;right:706.7px;transform-origin:100% 50%;text-align:right;transform:scaleX(0.98);">-13.150</div>
<div class="t" style="top:685px;height:14px;line-height:14px;font-size:9.7px;color:#000;right:605.2px;transform-origin:100% 50%;text-align:right;transform:scaleX(0.982);">-8.454</div>
<div class="t" style="top:685px;height:14px;line-height:14px;font-size:9.7px;color:#000;right:504.2px;transform-origin:100% 50%;text-align:right;transform:scaleX(0.982);">-4.696</div>
<div class="t" style="top:685px;height:14px;line-height:14px;font-size:9.7px;color:#000;right:403.3px;transform-origin:100% 50%;text-align:right;transform:scaleX(0.986);">65.348</div>
<svg style="left:0;top:0" width="1435" height="853" viewBox="0 0 1435 853"><rect x="18.5" y="711.45" width="113" height="1.3" fill="#b6b6b6"/></svg>
<i class="cb" style="left:90px;top:701.8px"></i>
<div class="t" style="top:700px;height:14px;line-height:14px;font-size:9.7px;color:#000;font-weight:bold;right:1304.4px;transform-origin:100% 50%;text-align:right;transform:scaleX(0.973);">401000</div>
<div class="t" style="top:700px;height:14px;line-height:14px;font-size:9.7px;color:#000;right:1010.2px;transform-origin:100% 50%;text-align:right;transform:scaleX(0.973);">0</div>
<div class="t" style="top:700px;height:14px;line-height:14px;font-size:9.7px;color:#000;right:908.7px;transform-origin:100% 50%;text-align:right;transform:scaleX(0.973);">0</div>
<div class="t" style="top:700px;height:14px;line-height:14px;font-size:9.7px;color:#000;right:605.2px;transform-origin:100% 50%;text-align:right;transform:scaleX(0.973);">0</div>
<svg style="left:0;top:0" width="1435" height="853" viewBox="0 0 1435 853"><rect x="18.5" y="726.45" width="113" height="1.3" fill="#b6b6b6"/></svg>
<i class="cb" style="left:90px;top:716.8px"></i>
<div class="t" style="top:715px;height:14px;line-height:14px;font-size:9.7px;color:#000;font-weight:bold;right:1304.4px;transform-origin:100% 50%;text-align:right;transform:scaleX(0.973);">401001</div>
<div class="t" style="top:715px;height:14px;line-height:14px;font-size:9.7px;color:#000;right:1010.2px;transform-origin:100% 50%;text-align:right;transform:scaleX(0.973);">0</div>
<div class="t" style="top:715px;height:14px;line-height:14px;font-size:9.7px;color:#000;right:908.7px;transform-origin:100% 50%;text-align:right;transform:scaleX(0.973);">0</div>
<div class="t" style="top:715px;height:14px;line-height:14px;font-size:9.7px;color:#000;right:605.2px;transform-origin:100% 50%;text-align:right;transform:scaleX(0.973);">0</div>
<i class="cb" style="left:90px;top:731.8px"></i>
<div class="t" style="top:730px;height:14px;line-height:14px;font-size:9.7px;color:#000;font-weight:bold;right:1304.4px;transform-origin:100% 50%;text-align:right;transform:scaleX(0.973);">405000</div>
<div class="t" style="top:730px;height:14px;line-height:14px;font-size:9.7px;color:#000;right:1010.2px;transform-origin:100% 50%;text-align:right;transform:scaleX(0.986);">61.094</div>
<div class="t" style="top:730px;height:14px;line-height:14px;font-size:9.7px;color:#000;right:908.7px;transform-origin:100% 50%;text-align:right;transform:scaleX(0.986);">56.894</div>
<div class="t" style="top:730px;height:14px;line-height:14px;font-size:9.7px;color:#000;right:807.7px;transform-origin:100% 50%;text-align:right;transform:scaleX(0.986);">61.590</div>
<div class="t" style="top:730px;height:14px;line-height:14px;font-size:9.7px;color:#000;right:706.7px;transform-origin:100% 50%;text-align:right;transform:scaleX(0.98);">-13.150</div>
<div class="t" style="top:730px;height:14px;line-height:14px;font-size:9.7px;color:#000;right:605.2px;transform-origin:100% 50%;text-align:right;transform:scaleX(0.982);">-8.454</div>
<div class="t" style="top:730px;height:14px;line-height:14px;font-size:9.7px;color:#000;right:504.2px;transform-origin:100% 50%;text-align:right;transform:scaleX(0.982);">-4.696</div>
<div class="t" style="top:730px;height:14px;line-height:14px;font-size:9.7px;color:#000;right:403.3px;transform-origin:100% 50%;text-align:right;transform:scaleX(0.986);">65.348</div>
<svg style="left:0;top:0" width="1435" height="853" viewBox="0 0 1435 853"><rect x="18.5" y="201.4" width="305.5" height="1.2" fill="#a6a6a6"/><rect x="18.5" y="141.15" width="1015.4" height="1.7" fill="#0404d0"/><rect x="1032.35" y="97.4" width="1.7" height="45.3" fill="#0404d0"/><rect x="323.8" y="155.75" width="710.1" height="1.7" fill="#0404d0"/><rect x="323.65" y="156" width="1.7" height="586.7" fill="#0404d0"/><rect x="1032.35" y="156" width="1.7" height="586.7" fill="#0404d0"/><rect x="18.5" y="186.25" width="305.5" height="1.7" fill="#0404d0"/><rect x="324" y="200.85" width="709.9" height="1.7" fill="#0404d0"/><rect x="18.5" y="741.15" width="1015.4" height="1.7" fill="#0404d0"/><rect x="931.1" y="216.1" width="103.6" height="1.4" fill="#217346"/><rect x="931.1" y="231.5" width="101" height="1.4" fill="#217346"/><rect x="931.1" y="216.1" width="1.4" height="16.8" fill="#217346"/><rect x="1033.3" y="216.1" width="1.4" height="14.2" fill="#217346"/><rect x="1031.3" y="230.2" width="4.3" height="4.3" fill="#fff"/><rect x="1031.9" y="230.8" width="3.3" height="3.3" fill="#217346"/></svg>
<div style="left:312.2px;top:98.6px;width:12.5px;height:12px;background:#fff;border:1px solid #bdbdbd;box-sizing:border-box;border-radius:1px"></div>
<svg style="left:314px;top:100.9px" width="9.5" height="8" viewBox="0 0 9.5 8"><path d="M2.6 0.3H9.3L6.6 3.3V7H5.3V3.3Z" fill="#333"/><path d="M0.2 4.8H3.6L1.9 6.8Z" fill="#333"/></svg>
<div style="left:312.2px;top:113.6px;width:12.5px;height:12px;background:#fff;border:1px solid #bdbdbd;box-sizing:border-box;border-radius:1px"></div>
<svg style="left:315.8px;top:118.5px" width="6" height="3.4" viewBox="0 0 6 3.4"><path d="M0 0H6L3 3.4Z" fill="#444"/></svg>
<div style="left:312.2px;top:128.6px;width:12.5px;height:12px;background:#fff;border:1px solid #bdbdbd;box-sizing:border-box;border-radius:1px"></div>
<svg style="left:315.8px;top:133.5px" width="6" height="3.4" viewBox="0 0 6 3.4"><path d="M0 0H6L3 3.4Z" fill="#444"/></svg>
<div style="left:118.3px;top:188.8px;width:12.5px;height:12px;background:#fff;border:1px solid #bdbdbd;box-sizing:border-box;border-radius:1px"></div>
<svg style="left:120.1px;top:191.1px" width="9.5" height="8" viewBox="0 0 9.5 8"><path d="M7 0.6V6.6M6.2 1.4H7.8" stroke="#444" stroke-width="1" fill="none"/><path d="M0.8 3.8H4.8L2.8 6.4Z" fill="#333"/></svg>
<div style="left:312.2px;top:188.8px;width:12.5px;height:12px;background:#fff;border:1px solid #bdbdbd;box-sizing:border-box;border-radius:1px"></div>
<svg style="left:315.8px;top:193.7px" width="6" height="3.4" viewBox="0 0 6 3.4"><path d="M0 0H6L3 3.4Z" fill="#444"/></svg>
<div style="left:413.3px;top:158.6px;width:12.5px;height:12px;background:#fff;border:1px solid #bdbdbd;box-sizing:border-box;border-radius:1px"></div>
<svg style="left:415.1px;top:160.9px" width="9.5" height="8" viewBox="0 0 9.5 8"><path d="M2.6 0.3H9.3L6.6 3.3V7H5.3V3.3Z" fill="#333"/><path d="M0.2 4.8H3.6L1.9 6.8Z" fill="#333"/></svg>
<div style="left:514.3px;top:158.6px;width:12.5px;height:12px;background:#fff;border:1px solid #bdbdbd;box-sizing:border-box;border-radius:1px"></div>
<svg style="left:517.9px;top:163.5px" width="6" height="3.4" viewBox="0 0 6 3.4"><path d="M0 0H6L3 3.4Z" fill="#444"/></svg>
<div style="left:449.3px;top:116.4px;width:36.4px;height:13.2px;background:#f4f4f4;border-top:1px solid #fff;border-left:1px solid #fff;border-right:1.4px solid #5a5a5a;border-bottom:1.4px solid #5a5a5a;box-sizing:border-box"></div>
<div class="t" style="top:116.6px;height:14px;line-height:14px;font-size:9.7px;color:#000;left:453.6px;transform-origin:0 50%;transform:scaleX(1.113);">Menu</div>
<div style="left:1193px;top:141.6px;width:10px;height:204px;overflow:hidden;background:#fff;border-left:1px solid #b4b4b4;border-top:1px solid #b4b4b4;border-bottom:1px solid #b4b4b4;box-sizing:border-box">
<div class="t" style="left:5.4px;top:4.6px;font-size:9.8px;font-weight:bold;line-height:12px;color:#000">Period</div>
<div style="left:5.5px;top:23.6px;width:30px;height:17.6px;border:1px solid #cfcfcf;border-radius:2px;background:#fff;box-sizing:border-box"></div>
<div style="left:5.5px;top:45.6px;width:30px;height:17.6px;border:1px solid #cfcfcf;border-radius:2px;background:#d4d4d4;box-sizing:border-box"></div>
<div style="left:5.5px;top:67.6px;width:30px;height:17.6px;border:1px solid #cfcfcf;border-radius:2px;background:#fff;box-sizing:border-box"></div>
<div style="left:5.5px;top:89.6px;width:30px;height:17.6px;border:1px solid #cfcfcf;border-radius:2px;background:#fff;box-sizing:border-box"></div>
<div style="left:5.5px;top:111.6px;width:30px;height:17.6px;border:1px solid #cfcfcf;border-radius:2px;background:#fff;box-sizing:border-box"></div>
<div style="left:5.5px;top:133.6px;width:30px;height:17.6px;border:1px solid #cfcfcf;border-radius:2px;background:#fff;box-sizing:border-box"></div>
<div style="left:5.5px;top:155.6px;width:30px;height:17.6px;border:1px solid #cfcfcf;border-radius:2px;background:#fff;box-sizing:border-box"></div>
<div style="left:5.5px;top:177.6px;width:30px;height:17.6px;border:1px solid #cfcfcf;border-radius:2px;background:#fff;box-sizing:border-box"></div>
</div>
<div style="left:1026.2px;top:788.2px;width:22px;height:22px;border-radius:50%;overflow:hidden;background:#0d2b60"><svg style="left:-0.2px;top:-0.2px" width="22.4" height="22.4" viewBox="0 0 22.4 22.4"><path d="M10.2 -1H24V14.6L7.2 17.2Z" fill="#1169bd"/><path d="M9.2 -1L5 18.6L24 15.6" fill="none" stroke="#fff" stroke-width="3" stroke-linejoin="miter"/></svg></div>
<div class="t" style="left:1052px;top:788.2px;height:24px;line-height:24px;font-size:23px;color:#0d5cb0;-webkit-text-stroke:0.45px;transform:scaleX(1.0);transform-origin:0 50%;letter-spacing:-0.1px">Luca<span style="color:#0c2456">Net</span></div>
<div class="t" style="left:1053px;top:811px;height:12px;line-height:12px;font-size:8.3px;color:#5d729c;transform:scaleX(1.03);transform-origin:0 50%">Simply intelligent.</div>
<div style="left:1150.2px;top:781px;width:44.8px;height:44px;background:#fff;border:1px solid #9cc5aa;box-sizing:border-box"></div>
<svg style="left:1152px;top:783px" width="40" height="34" viewBox="0 0 40 34"><rect x="20" y="3.4" width="17" height="26.4" rx="1" fill="#fff" stroke="#2a7d4f" stroke-width="1.3"/><g fill="#2a7d4f"><rect x="23" y="6.4" width="5" height="2.6"/><rect x="29.6" y="6.4" width="5" height="2.6"/><rect x="23" y="10.8" width="5" height="2.6"/><rect x="29.6" y="10.8" width="5" height="2.6"/><rect x="23" y="15.2" width="5" height="2.6"/><rect x="29.6" y="15.2" width="5" height="2.6"/><rect x="23" y="19.6" width="5" height="2.6"/><rect x="29.6" y="19.6" width="5" height="2.6"/><rect x="23" y="24" width="5" height="2.6"/><rect x="29.6" y="24" width="5" height="2.6"/></g><path d="M1 3.4L21.6 0.4V33.4L1 30.2Z" fill="#1f7244"/><text x="0" y="0" transform="translate(10.8 22.6) scale(0.78 1)" text-anchor="middle" font-family="Liberation Sans,sans-serif" font-weight="bold" font-size="16.5" fill="#fff">X</text></svg>
<div class="t" style="left:1172px;top:814.2px;height:11px;line-height:11px;font-size:10.6px;color:#2a7d4f;-webkit-text-stroke:0.3px #2a7d4f;transform:scaleX(0.98);transform-origin:0 50%">APP</div>
<svg style="left:0;top:0" width="1435" height="853" viewBox="0 0 1435 853"><rect x="1203" y="82" width="1" height="751" fill="#ababab"/><rect x="1205.5" y="84" width="11" height="749" fill="#d4d4d4"/></svg>
<div style="left:1205.5px;top:84px;width:11px;height:11px;background:#fff;border:1px solid #c0c0c0;box-sizing:border-box"></div>
<div style="left:1205.5px;top:97px;width:11px;height:670px;background:#fff;border:1px solid #c0c0c0;box-sizing:border-box"></div>
<div style="left:1205.5px;top:822.5px;width:11px;height:11px;background:#fff;border:1px solid #c0c0c0;box-sizing:border-box"></div>
<svg style="left:1208px;top:87.5px" width="6" height="4" viewBox="0 0 6 4"><path d="M0 3.5L3 0.5L6 3.5Z" fill="#555"/></svg>
<svg style="left:1208px;top:826.5px" width="6" height="4" viewBox="0 0 6 4"><path d="M0 0.5L3 3.5L6 0.5Z" fill="#555"/></svg>
<svg style="left:0;top:0" width="1435" height="853" viewBox="0 0 1435 853"><rect x="0" y="832.6" width="1203" height="1" fill="#ababab"/></svg>
<svg style="left:19.6px;top:839.6px" width="4" height="6.4" viewBox="0 0 4 6.4"><path d="M4 0V6.4L0 3.2Z" fill="#2a7b4c"/></svg>
<svg style="left:41px;top:839.6px" width="4" height="6.4" viewBox="0 0 4 6.4"><path d="M0 0V6.4L4 3.2Z" fill="#2a7b4c"/></svg>
<div class="t" style="top:836.4px;height:14px;line-height:14px;font-size:9.6px;color:#1a633b;font-weight:bold;left:59.6px;transform-origin:0 50%;-webkit-text-stroke:0.35px;">...</div>
<div style="left:0;top:833.6px;width:1027.3px;height:19.4px;overflow:hidden">
<svg style="left:0;top:0" width="1435" height="853" viewBox="0 0 1435 853"><rect x="76.7" y="1.2" width="90.9" height="16.4" fill="#fde699"/></svg>
<div class="t" style="left:86px;top:3.2px;height:14px;line-height:14px;font-size:9.7px;color:#111;-webkit-text-stroke:0.15px">Project Planning</div>
<svg style="left:0;top:0" width="1435" height="853" viewBox="0 0 1435 853"><rect x="171.3" y="1.2" width="92.1" height="16.4" fill="#fde699"/></svg>
<div class="t" style="left:180.6px;top:3.2px;height:14px;line-height:14px;font-size:9.7px;color:#111;-webkit-text-stroke:0.15px">Partner Planning</div>
<svg style="left:0;top:0" width="1435" height="853" viewBox="0 0 1435 853"><rect x="267.1" y="1.2" width="86.6" height="16.4" fill="#fde699"/></svg>
<div class="t" style="left:277.2px;top:3.2px;height:14px;line-height:14px;font-size:9.7px;color:#111;-webkit-text-stroke:0.15px">Detail Planning</div>
<svg style="left:0;top:0" width="1435" height="853" viewBox="0 0 1435 853"><rect x="357.4" y="1.2" width="98.7" height="16.4" fill="#fde699"/></svg>
<div class="t" style="left:367.5px;top:3.2px;height:14px;line-height:14px;font-size:9.7px;color:#111;-webkit-text-stroke:0.15px">Payment Planning</div>
<div class="t" style="left:467.9px;top:3.2px;height:14px;line-height:14px;font-size:9.7px;color:#555;-webkit-text-stroke:0.15px">Mapping Status</div>
<div class="t" style="left:561.5px;top:3.2px;height:14px;line-height:14px;font-size:9.7px;color:#555;-webkit-text-stroke:0.15px">Account to external account</div>
<svg style="left:0;top:0" width="1435" height="853" viewBox="0 0 1435 853"><rect x="698.1" y="1.2" width="41.9" height="16.4" fill="#aec0e5"/></svg>
<div class="t" style="left:705.7px;top:3.2px;height:14px;line-height:14px;font-size:9.7px;color:#111;-webkit-text-stroke:0.15px">Hours</div>
<svg style="left:0;top:0" width="1435" height="853" viewBox="0 0 1435 853"><rect x="744" y="1.2" width="87.1" height="16.4" fill="#aec0e5"/></svg>
<div class="t" style="left:753.4px;top:3.2px;height:14px;line-height:14px;font-size:9.7px;color:#111;-webkit-text-stroke:0.15px">AmountsByYear</div>
<svg style="left:0;top:0" width="1435" height="853" viewBox="0 0 1435 853"><rect x="835.4" y="1.2" width="102.9" height="16.4" fill="#aec0e5"/></svg>
<div class="t" style="left:845.4px;top:3.2px;height:14px;line-height:14px;font-size:9.7px;color:#111;-webkit-text-stroke:0.15px">AmountsByVersion</div>
<svg style="left:0;top:0" width="1435" height="853" viewBox="0 0 1435 853"><rect x="942.2" y="1.2" width="85.1" height="16.4" fill="#aec0e5"/></svg>
<div class="t" style="left:952px;top:3.2px;height:14px;line-height:14px;font-size:9.7px;color:#111;-webkit-text-stroke:0.15px">AmountsByProject</div>
<svg style="left:0;top:0" width="1435" height="853" viewBox="0 0 1435 853"><rect x="73.8" y="2.2" width="1.5" height="15.2" fill="#c2c2c2"/><rect x="168.4" y="2.2" width="1.5" height="15.2" fill="#c2c2c2"/><rect x="264.2" y="2.2" width="1.5" height="15.2" fill="#c2c2c2"/><rect x="354.5" y="2.2" width="1.5" height="15.2" fill="#c2c2c2"/><rect x="456.9" y="2.2" width="1.5" height="15.2" fill="#c2c2c2"/><rect x="547.5" y="2.2" width="1.5" height="15.2" fill="#c2c2c2"/><rect x="695" y="2.2" width="1.5" height="15.2" fill="#c2c2c2"/><rect x="740.9" y="2.2" width="1.5" height="15.2" fill="#c2c2c2"/><rect x="832.2" y="2.2" width="1.5" height="15.2" fill="#c2c2c2"/><rect x="939.1" y="2.2" width="1.5" height="15.2" fill="#c2c2c2"/></svg>
</div>
<div class="t" style="top:836.4px;height:14px;line-height:14px;font-size:9.6px;color:#1a633b;font-weight:bold;left:1033.4px;transform-origin:0 50%;-webkit-text-stroke:0.35px;">...</div>
<svg style="left:1051.4px;top:836.8px" width="12" height="12" viewBox="0 0 12 12"><circle cx="6" cy="6" r="5.3" fill="none" stroke="#777" stroke-width="1"/><path d="M6 3.2V8.8M3.2 6H8.8" stroke="#666" stroke-width="1.1"/></svg>
<svg style="left:0;top:0" width="1435" height="853" viewBox="0 0 1435 853"><rect x="1078.8" y="839.6" width="1.1" height="1.1" fill="#9a9a9a"/><rect x="1078.8" y="842.6" width="1.1" height="1.1" fill="#9a9a9a"/><rect x="1078.8" y="845.6" width="1.1" height="1.1" fill="#9a9a9a"/><rect x="1091.4" y="838" width="113.2" height="11" fill="#d4d4d4"/></svg>
<div style="left:1091.4px;top:838px;width:11.4px;height:11px;background:#fff;border:1px solid #c0c0c0;box-sizing:border-box"></div>
<div style="left:1102.8px;top:838px;width:12.8px;height:11px;background:#fff;border:1px solid #c0c0c0;box-sizing:border-box"></div>
<div style="left:1192.6px;top:838px;width:11.6px;height:11px;background:#fff;border:1px solid #c0c0c0;box-sizing:border-box"></div>
<svg style="left:1095.2px;top:840.6px" width="3.6" height="6" viewBox="0 0 3.6 6"><path d="M3.6 0V6L0 3Z" fill="#555"/></svg>
<svg style="left:1197px;top:840.6px" width="3.6" height="6" viewBox="0 0 3.6 6"><path d="M0 0V6L3.6 3Z" fill="#555"/></svg>
<svg style="left:0;top:0" width="1435" height="853" viewBox="0 0 1435 853"><rect x="1219.2" y="82" width="1" height="771" fill="#d0d0d0"/></svg>
<div class="t" style="top:92.6px;height:20px;line-height:20px;font-size:15.4px;color:#217346;left:1229.6px;transform-origin:0 50%;">PivotTable-Felder</div>
<svg style="left:1385.6px;top:98.6px" width="6.6" height="3.8" viewBox="0 0 6.6 3.8"><path d="M0 0H6.6L3.3 3.8Z" fill="#555"/></svg>
<svg style="left:1416.6px;top:96.2px" width="7.6" height="7.6" viewBox="0 0 7.6 7.6"><path d="M0.5 0.5L7.1 7.1M7.1 0.5L0.5 7.1" stroke="#444" stroke-width="1.2" fill="none"/></svg>
<div class="t" style="top:116.9px;height:14px;line-height:14px;font-size:8.82px;color:#444;left:1229.7px;transform-origin:0 50%;">In den Bericht aufzunehmende Felder</div>
<div class="t" style="top:128.4px;height:14px;line-height:14px;font-size:8.82px;color:#444;left:1229.7px;transform-origin:0 50%;">auswählen:</div>
<div style="left:1395.4px;top:118.2px;width:33px;height:20.6px;background:#fdfdfd;border:1px solid #c6c6c6;box-sizing:border-box"></div>
<svg style="left:1402.6px;top:123.4px" width="10.4" height="10.4" viewBox="0 0 10.4 10.4"><g fill="none" stroke="#777"><circle cx="5.2" cy="5.2" r="2.6" stroke-width="1.6"/><path d="M5.2 0.4V2 M5.2 8.4V10 M0.4 5.2H2 M8.4 5.2H10 M1.8 1.8L3 3 M7.4 7.4L8.6 8.6 M1.8 8.6L3 7.4 M7.4 3L8.6 1.8" stroke-width="1.5"/></g></svg>
<svg style="left:1419.2px;top:127px" width="5" height="3" viewBox="0 0 5 3"><path d="M0 0H5L2.5 3Z" fill="#555"/></svg>
<div style="left:1229px;top:150.2px;width:199.4px;height:14.8px;background:#fff;border:1px solid #c2c2c2;box-sizing:border-box"></div>
<div class="t" style="top:150.4px;height:14px;line-height:14px;font-size:8.82px;color:#666;left:1230.6px;transform-origin:0 50%;">Suchen</div>
<svg style="left:1416px;top:152.6px" width="10" height="10" viewBox="0 0 10 10"><circle cx="6.2" cy="3.8" r="2.9" fill="none" stroke="#2b6cb0" stroke-width="1.1"/><path d="M4.1 5.9L0.7 9.3" stroke="#2b6cb0" stroke-width="1.5" fill="none"/></svg>
<svg style="left:0;top:0" width="1435" height="853" viewBox="0 0 1435 853"><rect x="1229" y="176.8" width="199.4" height="291.4" fill="#fdfdfd"/></svg>
<div style="left:1230.2px;top:178.2px;width:9.6px;height:9.6px;background:#fff;border:1px solid #7a7a7a;box-sizing:border-box"></div>
<svg style="left:1231.6px;top:179.9px" width="7" height="6" viewBox="0 0 7 6"><path d="M0.5 3L2.5 5.2L6.5 0.5" stroke="#444" stroke-width="1" fill="none"/></svg>
<div class="t" style="top:176.1px;height:14px;line-height:14px;font-size:8.68px;color:#222;font-weight:bold;left:1244.7px;transform-origin:0 50%;">Account</div>
<div style="left:1230.2px;top:192.443px;width:9.6px;height:9.6px;background:#fff;border:1px solid #7a7a7a;box-sizing:border-box"></div>
<div class="t" style="top:190.343px;height:14px;line-height:14px;font-size:8.88px;color:#484848;left:1244.7px;transform-origin:0 50%;">AccountID</div>
<div style="left:1230.2px;top:206.686px;width:9.6px;height:9.6px;background:#fff;border:1px solid #7a7a7a;box-sizing:border-box"></div>
<svg style="left:1231.6px;top:208.386px" width="7" height="6" viewBox="0 0 7 6"><path d="M0.5 3L2.5 5.2L6.5 0.5" stroke="#444" stroke-width="1" fill="none"/></svg>
<div class="t" style="top:204.586px;height:14px;line-height:14px;font-size:8.68px;color:#222;font-weight:bold;left:1244.7px;transform-origin:0 50%;">AccountSorting</div>
<div style="left:1230.2px;top:220.929px;width:9.6px;height:9.6px;background:#fff;border:1px solid #7a7a7a;box-sizing:border-box"></div>
<div class="t" style="top:218.829px;height:14px;line-height:14px;font-size:8.88px;color:#484848;left:1244.7px;transform-origin:0 50%;">BMD_ProjectNo</div>
<div style="left:1230.2px;top:235.172px;width:9.6px;height:9.6px;background:#fff;border:1px solid #7a7a7a;box-sizing:border-box"></div>
<svg style="left:1231.6px;top:236.872px" width="7" height="6" viewBox="0 0 7 6"><path d="M0.5 3L2.5 5.2L6.5 0.5" stroke="#444" stroke-width="1" fill="none"/></svg>
<div class="t" style="top:233.072px;height:14px;line-height:14px;font-size:8.68px;color:#222;font-weight:bold;left:1244.7px;transform-origin:0 50%;">Datatype</div>
<div style="left:1230.2px;top:249.415px;width:9.6px;height:9.6px;background:#fff;border:1px solid #7a7a7a;box-sizing:border-box"></div>
<div class="t" style="top:247.315px;height:14px;line-height:14px;font-size:8.88px;color:#484848;left:1244.7px;transform-origin:0 50%;">Month</div>
<div style="left:1230.2px;top:263.658px;width:9.6px;height:9.6px;background:#fff;border:1px solid #7a7a7a;box-sizing:border-box"></div>
<svg style="left:1231.6px;top:265.358px" width="7" height="6" viewBox="0 0 7 6"><path d="M0.5 3L2.5 5.2L6.5 0.5" stroke="#444" stroke-width="1" fill="none"/></svg>
<div class="t" style="top:261.558px;height:14px;line-height:14px;font-size:8.68px;color:#222;font-weight:bold;left:1244.7px;transform-origin:0 50%;">Period</div>
<div style="left:1230.2px;top:277.901px;width:9.6px;height:9.6px;background:#fff;border:1px solid #7a7a7a;box-sizing:border-box"></div>
<svg style="left:1231.6px;top:279.601px" width="7" height="6" viewBox="0 0 7 6"><path d="M0.5 3L2.5 5.2L6.5 0.5" stroke="#444" stroke-width="1" fill="none"/></svg>
<div class="t" style="top:275.801px;height:14px;line-height:14px;font-size:8.68px;color:#222;font-weight:bold;left:1244.7px;transform-origin:0 50%;">Project</div>
<svg style="left:1416.4px;top:278.401px" width="9" height="9" viewBox="0 0 9 9"><path d="M0.2 0.4H8.8L5.4 4.4V8.8H3.6V4.4Z" fill="#9a9a9a"/></svg>
<div style="left:1230.2px;top:292.144px;width:9.6px;height:9.6px;background:#fff;border:1px solid #7a7a7a;box-sizing:border-box"></div>
<div class="t" style="top:290.044px;height:14px;line-height:14px;font-size:8.88px;color:#484848;left:1244.7px;transform-origin:0 50%;">ProjectCategory</div>
<div style="left:1230.2px;top:306.387px;width:9.6px;height:9.6px;background:#fff;border:1px solid #7a7a7a;box-sizing:border-box"></div>
<div class="t" style="top:304.287px;height:14px;line-height:14px;font-size:8.88px;color:#484848;left:1244.7px;transform-origin:0 50%;">ProjectID</div>
<div style="left:1230.2px;top:320.63px;width:9.6px;height:9.6px;background:#fff;border:1px solid #7a7a7a;box-sizing:border-box"></div>
<div class="t" style="top:318.53px;height:14px;line-height:14px;font-size:8.88px;color:#484848;left:1244.7px;transform-origin:0 50%;">ProjectLeader</div>
<div style="left:1230.2px;top:334.873px;width:9.6px;height:9.6px;background:#fff;border:1px solid #7a7a7a;box-sizing:border-box"></div>
<div class="t" style="top:332.773px;height:14px;line-height:14px;font-size:8.88px;color:#484848;left:1244.7px;transform-origin:0 50%;">ProjectType</div>
<div style="left:1230.2px;top:349.116px;width:9.6px;height:9.6px;background:#fff;border:1px solid #7a7a7a;box-sizing:border-box"></div>
<svg style="left:1231.6px;top:350.816px" width="7" height="6" viewBox="0 0 7 6"><path d="M0.5 3L2.5 5.2L6.5 0.5" stroke="#444" stroke-width="1" fill="none"/></svg>
<div class="t" style="top:347.016px;height:14px;line-height:14px;font-size:8.68px;color:#222;font-weight:bold;left:1244.7px;transform-origin:0 50%;">Value</div>
<div style="left:1230.2px;top:363.359px;width:9.6px;height:9.6px;background:#fff;border:1px solid #7a7a7a;box-sizing:border-box"></div>
<svg style="left:1231.6px;top:365.059px" width="7" height="6" viewBox="0 0 7 6"><path d="M0.5 3L2.5 5.2L6.5 0.5" stroke="#444" stroke-width="1" fill="none"/></svg>
<div class="t" style="top:361.259px;height:14px;line-height:14px;font-size:8.68px;color:#222;font-weight:bold;left:1244.7px;transform-origin:0 50%;">Version</div>
<svg style="left:1416.4px;top:363.859px" width="9" height="9" viewBox="0 0 9 9"><path d="M0.2 0.4H8.8L5.4 4.4V8.8H3.6V4.4Z" fill="#9a9a9a"/></svg>
<div style="left:1230.2px;top:377.602px;width:9.6px;height:9.6px;background:#fff;border:1px solid #7a7a7a;box-sizing:border-box"></div>
<svg style="left:1231.6px;top:379.302px" width="7" height="6" viewBox="0 0 7 6"><path d="M0.5 3L2.5 5.2L6.5 0.5" stroke="#444" stroke-width="1" fill="none"/></svg>
<div class="t" style="top:375.502px;height:14px;line-height:14px;font-size:8.68px;color:#222;font-weight:bold;left:1244.7px;transform-origin:0 50%;">Year</div>
<div class="t" style="top:395.9px;height:14px;line-height:14px;font-size:8.82px;color:#444;left:1230.2px;transform-origin:0 50%;">Weitere Tabellen...</div>
<div style="left:1230px;top:480.4px;width:198px;height:0px;border-top:1px dotted #c4c4c4"></div>
<div class="t" style="top:483.1px;height:14px;line-height:14px;font-size:8.68px;color:#444;left:1231.8px;transform-origin:0 50%;">Felder zwischen den Bereichen ziehen und</div>
<div class="t" style="top:494.6px;height:14px;line-height:14px;font-size:8.82px;color:#444;left:1231.8px;transform-origin:0 50%;">ablegen:</div>
<svg style="left:1233.6px;top:521px" width="8.6" height="8.6" viewBox="0 0 8.6 8.6"><path d="M0.2 0.4H8.4L5.2 4.2V8.4H3.4V4.2Z" fill="#8a8a8a"/></svg>
<div class="t" style="top:518.7px;height:14px;line-height:14px;font-size:8.82px;color:#444;left:1248.4px;transform-origin:0 50%;">Filter</div>
<svg style="left:1335px;top:521.4px" width="7.4" height="7.6" viewBox="0 0 7.4 7.6"><path d="M0 0H2V7.6H0Z" fill="#8a8a8a"/><path d="M2.9 0H4.5V7.6H2.9Z M5.5 0H7.1V7.6H5.5Z" fill="#bdbdbd"/></svg>
<div class="t" style="top:518.7px;height:14px;line-height:14px;font-size:8.82px;color:#444;left:1348.5px;transform-origin:0 50%;">Spalten</div>
<svg style="left:1234.6px;top:673.8px" width="7.6" height="7.4" viewBox="0 0 7.6 7.4"><path d="M0 0H7.6V2H0Z" fill="#8a8a8a"/><path d="M0 2.8H7.6V4.6H0Z M0 5.4H7.6V7.2H0Z" fill="#b4b4b4"/></svg>
<div class="t" style="top:670.7px;height:14px;line-height:14px;font-size:8.82px;color:#444;left:1248.4px;transform-origin:0 50%;">Zeilen</div>
<div class="t" style="top:670.3px;height:14px;line-height:14px;font-size:10px;color:#666;left:1335.6px;transform-origin:0 50%;font-family:'Liberation Serif',serif;">Σ</div>
<div class="t" style="top:670.7px;height:14px;line-height:14px;font-size:8.82px;color:#444;left:1348.5px;transform-origin:0 50%;">Werte</div>
<svg style="left:0;top:0" width="1435" height="853" viewBox="0 0 1435 853"><rect x="1230.9" y="534.5" width="94.2" height="128" fill="#fdfdfd"/><rect x="1331.6" y="534.5" width="97.2" height="128" fill="#fdfdfd"/><rect x="1230.9" y="686.5" width="94.2" height="128.2" fill="#fdfdfd"/><rect x="1331.6" y="686.5" width="97.2" height="128.2" fill="#fdfdfd"/><rect x="1328.8" y="519.8" width="1.2" height="295" fill="#cfcfcf"/><rect x="1230.9" y="666.2" width="198" height="1" fill="#cfcfcf"/></svg>
<div style="left:1232.4px;top:536.2px;width:91.4px;height:13.4px;background:#fff;border:1px solid #bcbcbc;box-sizing:border-box"></div>
<div class="t" style="top:536px;height:14px;line-height:14px;font-size:8.82px;color:#444;left:1237px;transform-origin:0 50%;">Project</div>
<svg style="left:1311.4px;top:541.4px" width="5.4" height="3" viewBox="0 0 5.4 3"><path d="M0 0H5.4L2.7 3Z" fill="#555"/></svg>
<div style="left:1232.4px;top:552px;width:91.4px;height:13.4px;background:#fff;border:1px solid #bcbcbc;box-sizing:border-box"></div>
<div class="t" style="top:551.8px;height:14px;line-height:14px;font-size:8.82px;color:#444;left:1237px;transform-origin:0 50%;">Year</div>
<svg style="left:1311.4px;top:557.2px" width="5.4" height="3" viewBox="0 0 5.4 3"><path d="M0 0H5.4L2.7 3Z" fill="#555"/></svg>
<div style="left:1232.4px;top:567.8px;width:91.4px;height:13.4px;background:#fff;border:1px solid #bcbcbc;box-sizing:border-box"></div>
<div class="t" style="top:567.6px;height:14px;line-height:14px;font-size:8.82px;color:#444;left:1237px;transform-origin:0 50%;">Period</div>
<svg style="left:1311.4px;top:573px" width="5.4" height="3" viewBox="0 0 5.4 3"><path d="M0 0H5.4L2.7 3Z" fill="#555"/></svg>
<div style="left:1332.6px;top:536.2px;width:95.6px;height:13.4px;background:#fff;border:1px solid #bcbcbc;box-sizing:border-box"></div>
<div class="t" style="top:536px;height:14px;line-height:14px;font-size:8.82px;color:#444;left:1337.2px;transform-origin:0 50%;">Version</div>
<svg style="left:1415.8px;top:541.4px" width="5.4" height="3" viewBox="0 0 5.4 3"><path d="M0 0H5.4L2.7 3Z" fill="#555"/></svg>
<div style="left:1332.6px;top:552px;width:95.6px;height:13.4px;background:#fff;border:1px solid #bcbcbc;box-sizing:border-box"></div>
<div class="t" style="top:551.8px;height:14px;line-height:14px;font-size:8.82px;color:#444;left:1337.2px;transform-origin:0 50%;">Datatype</div>
<svg style="left:1415.8px;top:557.2px" width="5.4" height="3" viewBox="0 0 5.4 3"><path d="M0 0H5.4L2.7 3Z" fill="#555"/></svg>
<div style="left:1232.4px;top:688.4px;width:91.4px;height:13.4px;background:#fff;border:1px solid #bcbcbc;box-sizing:border-box"></div>
<div class="t" style="top:688.2px;height:14px;line-height:14px;font-size:8.82px;color:#444;left:1237px;transform-origin:0 50%;">AccountSorting</div>
<svg style="left:1311.4px;top:693.6px" width="5.4" height="3" viewBox="0 0 5.4 3"><path d="M0 0H5.4L2.7 3Z" fill="#555"/></svg>
<div style="left:1232.4px;top:704.2px;width:91.4px;height:13.4px;background:#fff;border:1px solid #bcbcbc;box-sizing:border-box"></div>
<div class="t" style="top:704px;height:14px;line-height:14px;font-size:8.82px;color:#444;left:1237px;transform-origin:0 50%;">Account</div>
<svg style="left:1311.4px;top:709.4px" width="5.4" height="3" viewBox="0 0 5.4 3"><path d="M0 0H5.4L2.7 3Z" fill="#555"/></svg>
<div style="left:1332.6px;top:688.4px;width:95.6px;height:13.4px;background:#fff;border:1px solid #bcbcbc;box-sizing:border-box"></div>
<svg style="left:1415.8px;top:693.6px" width="5.4" height="3" viewBox="0 0 5.4 3"><path d="M0 0H5.4L2.7 3Z" fill="#555"/></svg>
<div style="left:1231.2px;top:833px;width:9.6px;height:9.6px;background:#fff;border:1px solid #8a8a8a;box-sizing:border-box"></div>
<div class="t" style="top:831.2px;height:14px;line-height:14px;font-size:8.82px;color:#444;left:1245.4px;transform-origin:0 50%;">Layoutaktualisierung zurüc...</div>
<svg style="left:0;top:0" width="1435" height="853" viewBox="0 0 1435 853"><rect x="1370.8" y="830" width="58" height="15.6" fill="#fcfcfc"/></svg>
<div class="t" style="top:831px;height:14px;line-height:14px;font-size:8.82px;color:#b0b0b0;left:1370.8px;width:58px;text-align:center;transform-origin:50% 50%;">Aktualisieren</div>
</body>
</html>
